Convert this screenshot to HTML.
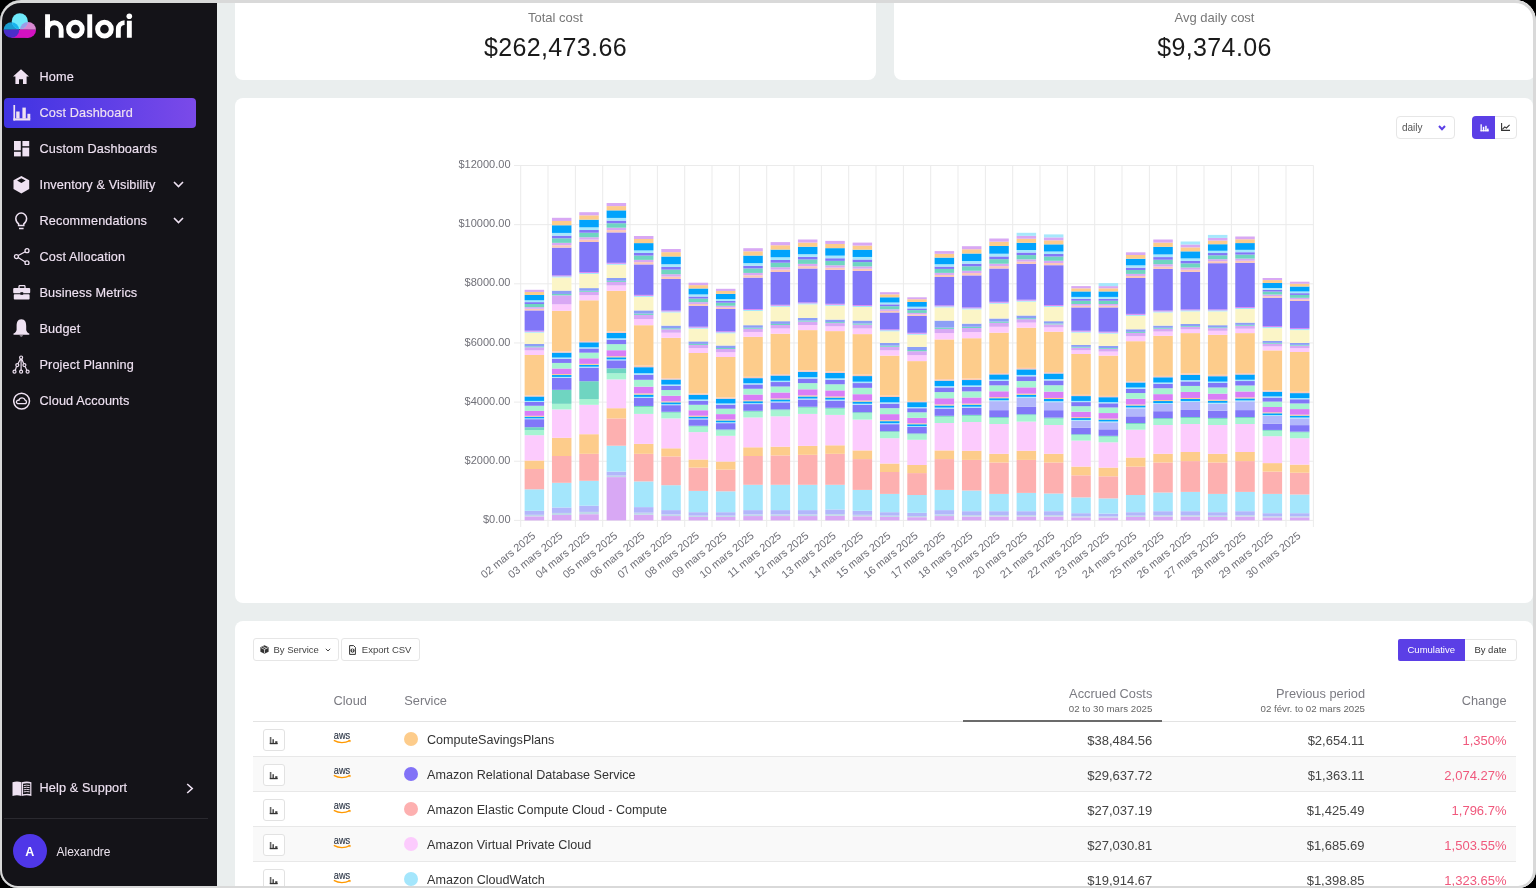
<!DOCTYPE html>
<html><head><meta charset="utf-8">
<style>
*{box-sizing:border-box;margin:0;padding:0}
html,body{width:1536px;height:888px;overflow:hidden;background:#000;font-family:"Liberation Sans",sans-serif}
.frame{position:absolute;left:0;top:0;width:1536px;height:888px;border-radius:21px 21px 18px 18px;overflow:hidden;background:#eaeeee;will-change:transform}
.ring{position:absolute;left:0;top:0;width:1536px;height:888px;border-radius:21px 21px 18px 18px;border:3px solid #d9d9d9;border-left-width:2.5px;border-bottom-width:2px;pointer-events:none;z-index:50}
.abs{position:absolute}
.side{position:absolute;left:0;top:0;width:217px;height:888px;background:#141318}
.nav{position:absolute;left:0;width:217px;height:30px;color:#efe2f2;font-size:12.7px;-webkit-text-stroke:0.15px #efe2f2;letter-spacing:0.12px;line-height:30px}
.nav .tx{position:absolute;left:39.5px;top:0;white-space:nowrap}
.nav svg{position:absolute}
.active{position:absolute;left:4px;top:98px;width:192px;height:29.5px;border-radius:4px;background:linear-gradient(90deg,#3f33e2 0%,#5c3ee6 50%,#7b4ae9 100%)}
.card{position:absolute;background:#fff;border-radius:8px}
.lbl{position:absolute;font-size:13px;color:#777;white-space:nowrap;text-align:center}
.big{position:absolute;font-size:25px;color:#1a1a1a;white-space:nowrap;text-align:center;letter-spacing:0.35px}
.chart{position:absolute;left:0;top:0;z-index:5}
.yl{font-size:11px;fill:#707078;font-family:"Liberation Sans",sans-serif}
.xl{font-size:10.85px;fill:#707078;font-family:"Liberation Sans",sans-serif}
.btn{position:absolute;border:1px solid #e6e6e6;border-radius:3px;background:#fff;font-size:9.5px;color:#444;white-space:nowrap}
.th{position:absolute;font-size:12.8px;color:#7b7b82;white-space:nowrap}
.ths{position:absolute;font-size:9.7px;color:#666;white-space:nowrap}
.row{position:absolute;left:253px;width:1263px;height:35px;border-bottom:1px solid #e8e8e8}
.row.alt{background:#f9f9f9}
.cbtn{position:absolute;left:9.8px;top:7px;width:22px;height:22px;border:1px solid #e2e2e2;border-radius:3px;background:#fff}
.dot{position:absolute;left:151px;width:14px;height:14px;border-radius:50%}
.svc{position:absolute;left:174px;font-size:12.6px;color:#333;white-space:nowrap}
.num{position:absolute;font-size:13px;color:#444;white-space:nowrap;text-align:right}
.chg{position:absolute;font-size:13px;color:#f0587c;white-space:nowrap;text-align:right}
</style></head><body>
<div class="frame">
  <!-- SIDEBAR -->
  <div class="side">
    <!-- logo -->
    <svg class="abs" style="left:0;top:0" width="140" height="45" viewBox="0 0 140 45">
      <defs>
        <clipPath id="up"><rect x="0" y="0" width="40" height="29.8"/></clipPath>
        <clipPath id="dn"><rect x="0" y="29.8" width="40" height="10"/></clipPath>
        <clipPath id="lc"><circle cx="11.4" cy="30" r="7.8"/></clipPath>
        <clipPath id="rc"><circle cx="28" cy="29.9" r="8"/></clipPath>
      </defs>
      <g clip-path="url(#up)">
        <circle cx="11.4" cy="30" r="7.8" fill="#1a9cd0"/>
        <circle cx="28" cy="29.9" r="8" fill="#d98ad2"/>
        <circle cx="19.8" cy="21.2" r="8" fill="#6fe9fa"/>
        <g clip-path="url(#lc)"><circle cx="19.8" cy="21.2" r="8" fill="#18b4ee"/></g>
        <g clip-path="url(#rc)"><circle cx="19.8" cy="21.2" r="8" fill="#9a9fe8"/></g>
      </g>
      <g clip-path="url(#dn)">
        <rect x="11.4" y="22" width="16.6" height="15.9" fill="#d312c1"/>
        <circle cx="28" cy="29.9" r="8" fill="#d312c1"/>
        <circle cx="11.4" cy="30" r="7.8" fill="#4a2ec8"/>
      </g>
      <g fill="none" stroke="#fff" stroke-width="4.9">
        <path d="M47.55 14.3 V37.8"/>
        <path d="M47.55 29.5 A6.8 6.8 0 0 1 61.15 29.5 V37.8"/>
        <circle cx="75.4" cy="29.15" r="6.8" stroke-width="5"/>
        <path d="M89.75 14.3 V37.8"/>
        <circle cx="104.45" cy="29.15" r="6.8" stroke-width="5"/>
        <path d="M118.35 37.8 V28.8 A6.3 6.3 0 0 1 124.6 22.6"/>
        <path d="M129.35 20.8 V37.8"/>
      </g>
      <circle cx="129.3" cy="16.2" r="2.8" fill="#fff"/>
    </svg>
    <div class="active"></div>
    <!-- nav items -->
    <div class="nav" style="top:61.5px">
      <svg style="left:13px;top:7.5px" width="16" height="15" viewBox="0 0 16 15"><path d="M8 0.3 L16 7.6 H13.6 V15 H10 V10.3 H6 V15 H2.4 V7.6 H0 Z" fill="#efe2f2"/></svg>
      <span class="tx">Home</span>
    </div>
    <div class="nav" style="top:97.5px">
      <svg style="left:12.5px;top:7.3px" width="18" height="16" viewBox="0 0 18 16"><rect x="0.4" y="0" width="1.7" height="15.5" fill="#efe2f2"/><rect x="3.2" y="6.5" width="3.4" height="7" fill="#efe2f2"/><rect x="9.4" y="2.6" width="3.4" height="11" fill="#efe2f2"/><rect x="14.4" y="8.8" width="2.9" height="5" fill="#efe2f2"/><rect x="0.4" y="13.3" width="16.9" height="2.2" fill="#efe2f2"/></svg>
      <span class="tx">Cost Dashboard</span>
    </div>
    <div class="nav" style="top:133.5px">
      <svg style="left:13.5px;top:7px" width="16" height="16" viewBox="0 0 16 16"><rect x="0" y="0" width="6.8" height="9.3" fill="#efe2f2"/><rect x="8.4" y="0" width="6.8" height="5.2" fill="#efe2f2"/><rect x="0" y="10.8" width="6.8" height="4.6" fill="#efe2f2"/><rect x="8.4" y="6.6" width="6.8" height="8.8" fill="#efe2f2"/></svg>
      <span class="tx">Custom Dashboards</span>
    </div>
    <div class="nav" style="top:169.5px">
      <svg style="left:13px;top:5.5px" width="17" height="19" viewBox="0 0 17 19"><path d="M8.35 0.9 L16.2 5.3 V14 L8.35 18.4 L0.5 14 V5.3 Z" fill="#efe2f2"/><path d="M8.35 3.2 L12.6 5.6 L8.35 8 L4.1 5.6 Z" fill="#141318"/></svg>
      <span class="tx">Inventory &amp; Visibility</span>
      <svg style="left:173px;top:11.5px" width="11" height="7" viewBox="0 0 11 7"><path d="M1 1 L5.5 5.6 L10 1" fill="none" stroke="#efe2f2" stroke-width="1.6"/></svg>
    </div>
    <div class="nav" style="top:205.5px">
      <svg style="left:14px;top:5px" width="15" height="20" viewBox="0 0 15 20"><path d="M4.6 14.4 V12.9 C3 11.7 1.8 10 1.8 7.5 A5.4 5.4 0 0 1 12.6 7.5 C12.6 10 11.4 11.7 9.8 12.9 V14.4 Z" fill="none" stroke="#efe2f2" stroke-width="1.5"/><path d="M5 17.6 H9.6" stroke="#efe2f2" stroke-width="1.5"/></svg>
      <span class="tx">Recommendations</span>
      <svg style="left:173px;top:11.5px" width="11" height="7" viewBox="0 0 11 7"><path d="M1 1 L5.5 5.6 L10 1" fill="none" stroke="#efe2f2" stroke-width="1.6"/></svg>
    </div>
    <div class="nav" style="top:241.5px">
      <svg style="left:12.5px;top:6px" width="18" height="17" viewBox="0 0 18 17"><circle cx="3.4" cy="8.6" r="2" fill="none" stroke="#efe2f2" stroke-width="1.3"/><circle cx="14" cy="2.7" r="2" fill="none" stroke="#efe2f2" stroke-width="1.3"/><circle cx="14" cy="14.9" r="2" fill="none" stroke="#efe2f2" stroke-width="1.3"/><path d="M5.2 7.6 L12.2 3.7 M5.2 9.6 L12.2 13.9" stroke="#efe2f2" stroke-width="1.2"/></svg>
      <span class="tx">Cost Allocation</span>
    </div>
    <div class="nav" style="top:277.5px">
      <svg style="left:12.5px;top:7.5px" width="18" height="15" viewBox="0 0 18 15"><path d="M6 3 V1.5 Q6 0.6 7 0.6 H11 Q12 0.6 12 1.5 V3" fill="none" stroke="#efe2f2" stroke-width="1.3"/><rect x="0.2" y="3" width="17" height="5.2" rx="1" fill="#efe2f2"/><rect x="0.8" y="9.2" width="15.8" height="5.4" rx="0.8" fill="#efe2f2"/><rect x="7.4" y="7.2" width="2.8" height="2.6" fill="#141318"/></svg>
      <span class="tx">Business Metrics</span>
    </div>
    <div class="nav" style="top:313.5px">
      <svg style="left:13px;top:5.5px" width="17" height="19" viewBox="0 0 17 19"><path d="M8.3 0.3 C4.6 0.3 3.6 3.5 3.6 7 V10.8 C3.6 12.2 2.2 14 0.5 14.6 V15.8 H16.3 V14.6 C14.6 14 13.2 12.2 13.2 10.8 V7 C13.2 3.5 12.2 0.3 8.3 0.3 Z" fill="#efe2f2"/><path d="M6.4 16.4 Q8.3 18.6 10.2 16.4 Z" fill="#efe2f2"/></svg>
      <span class="tx">Budget</span>
    </div>
    <div class="nav" style="top:349.5px">
      <svg style="left:12px;top:5px" width="18" height="19" viewBox="0 0 18 19"><g fill="none" stroke="#efe2f2" stroke-width="1.2"><circle cx="9.1" cy="2.5" r="1.5"/><circle cx="5.3" cy="10.1" r="1.5"/><circle cx="12.4" cy="10.1" r="1.5"/><circle cx="2.5" cy="16.7" r="1.5"/><circle cx="9.1" cy="16.7" r="1.5"/><circle cx="15.6" cy="16.7" r="1.5"/><path d="M8.4 3.9 L6 8.7 M9.8 3.9 L11.7 8.7 M9.1 4 V15.2 M4.5 11.4 L3.3 15.4 M13.2 11.4 L14.8 15.4"/></g></svg>
      <span class="tx">Project Planning</span>
    </div>
    <div class="nav" style="top:385.5px">
      <svg style="left:12.5px;top:6px" width="18" height="18" viewBox="0 0 18 18"><circle cx="8.6" cy="9.1" r="7.9" fill="none" stroke="#efe2f2" stroke-width="1.5"/><path d="M4.6 11.6 H12.6 A1.9 1.9 0 0 0 12.2 8.2 A3.3 3.3 0 0 0 5.9 8.3 A1.7 1.7 0 0 0 4.6 11.6 Z" fill="none" stroke="#efe2f2" stroke-width="1.3"/></svg>
      <span class="tx">Cloud Accounts</span>
    </div>

    <div class="nav" style="top:773px">
      <svg style="left:11.5px;top:7.5px" width="20" height="16" viewBox="0 0 20 16"><path d="M0.5 1.3 Q5 -0.2 9.4 1.3 V15 Q5 13.6 0.5 15 Z" fill="#efe2f2"/><path d="M9.8 1.3 Q14.6 -0.2 19.4 1.3 V15 Q14.6 13.6 9.8 15 Z" fill="#efe2f2"/><path d="M11 2.8 Q14.5 1.6 18.2 2.6 V12.9 Q14.5 12.2 11 13.3 Z" fill="#141318"/><path d="M11.6 4.6 Q14.5 3.8 17.6 4.5 M11.6 6.7 Q14.5 6 17.6 6.6 M11.6 8.8 Q14.5 8.1 17.6 8.7 M11.6 10.9 Q14.5 10.2 17.6 10.8" fill="none" stroke="#efe2f2" stroke-width="0.9"/></svg>
      <span class="tx">Help &amp; Support</span>
      <svg style="left:186px;top:9.5px" width="8" height="11" viewBox="0 0 8 11"><path d="M1.2 1 L6.2 5.5 L1.2 10" fill="none" stroke="#efe2f2" stroke-width="1.6"/></svg>
    </div>
    <div class="abs" style="left:4px;top:818px;width:204px;height:1px;background:#2a292f"></div>
    <div class="abs" style="left:12.7px;top:833.5px;width:34.3px;height:34.3px;border-radius:50%;background:#4f37e8;color:#fff;font-size:12.5px;font-weight:bold;text-align:center;line-height:37px">A</div>
    <div class="abs" style="left:56.5px;top:843.5px;font-size:12px;color:#ece4ee;line-height:16px">Alexandre</div>
  </div>

  <!-- TOP CARDS -->
  <div class="card" style="left:235px;top:-20px;width:641px;height:100px"></div>
  <div class="card" style="left:894px;top:-20px;width:641px;height:100px"></div>
  <div class="lbl" style="left:235px;width:641px;top:10.5px;line-height:14px">Total cost</div>
  <div class="big" style="left:235px;width:641px;top:32.3px;line-height:30px">$262,473.66</div>
  <div class="lbl" style="left:894px;width:641px;top:10.5px;line-height:14px">Avg daily cost</div>
  <div class="big" style="left:894px;width:641px;top:32.3px;line-height:30px">$9,374.06</div>

  <!-- CHART CARD -->
  <div class="card" style="left:235px;top:98px;width:1298px;height:505px"></div>
  <div class="btn" style="left:1396px;top:116px;width:59px;height:22.5px;border-radius:4px;font-size:10px;color:#555;line-height:21px;padding-left:5px">daily
    <svg class="abs" style="left:41px;top:8px" width="8" height="6" viewBox="0 0 8 6"><path d="M1 1 L4 4.2 L7 1" fill="none" stroke="#5b3fe6" stroke-width="2"/></svg>
  </div>
  <div class="abs" style="left:1472px;top:116px;width:44.5px;height:22.5px;border:1px solid #e6e6e6;border-radius:4px;background:#fff"></div>
  <div class="abs" style="left:1472px;top:116px;width:22.5px;height:22.5px;border-radius:4px 0 0 4px;background:#5b3fe6">
    <svg class="abs" style="left:7.5px;top:7.5px" width="9" height="8" viewBox="0 0 9 8"><rect x="0.5" y="0.3" width="1.3" height="7" fill="#fff"/><rect x="2.8" y="2.8" width="1.5" height="4.5" fill="#fff"/><rect x="5.2" y="1.8" width="1.5" height="5.5" fill="#fff"/><rect x="7" y="4.6" width="1.6" height="2.7" fill="#fff"/><rect x="0.5" y="6.2" width="8.1" height="1.1" fill="#fff"/></svg>
  </div>
  <svg class="abs" style="left:1501px;top:123px" width="9" height="8" viewBox="0 0 9 8"><path d="M0.6 0 V7.4 H9" fill="none" stroke="#333" stroke-width="1.1"/><path d="M1.3 6.4 L3.8 3.9 L5.4 5 L8.6 1.9" fill="none" stroke="#333" stroke-width="1.1"/></svg>

  <svg class="chart" width="1536" height="888" viewBox="0 0 1536 888"><line x1="514" y1="520.40" x2="1313.4" y2="520.40" stroke="#ebebeb" stroke-width="1"/><text x="510.5" y="523.00" text-anchor="end" class="yl">$0.00</text><line x1="514" y1="461.25" x2="1313.4" y2="461.25" stroke="#ebebeb" stroke-width="1"/><text x="510.5" y="463.85" text-anchor="end" class="yl">$2000.00</text><line x1="514" y1="402.10" x2="1313.4" y2="402.10" stroke="#ebebeb" stroke-width="1"/><text x="510.5" y="404.70" text-anchor="end" class="yl">$4000.00</text><line x1="514" y1="342.95" x2="1313.4" y2="342.95" stroke="#ebebeb" stroke-width="1"/><text x="510.5" y="345.55" text-anchor="end" class="yl">$6000.00</text><line x1="514" y1="283.80" x2="1313.4" y2="283.80" stroke="#ebebeb" stroke-width="1"/><text x="510.5" y="286.40" text-anchor="end" class="yl">$8000.00</text><line x1="514" y1="224.65" x2="1313.4" y2="224.65" stroke="#ebebeb" stroke-width="1"/><text x="510.5" y="227.25" text-anchor="end" class="yl">$10000.00</text><line x1="514" y1="165.50" x2="1313.4" y2="165.50" stroke="#ebebeb" stroke-width="1"/><text x="510.5" y="168.10" text-anchor="end" class="yl">$12000.00</text><line x1="520.70" y1="165.5" x2="520.70" y2="527" stroke="#ebebeb" stroke-width="1"/><line x1="548.03" y1="165.5" x2="548.03" y2="527" stroke="#ebebeb" stroke-width="1"/><line x1="575.37" y1="165.5" x2="575.37" y2="527" stroke="#ebebeb" stroke-width="1"/><line x1="602.70" y1="165.5" x2="602.70" y2="527" stroke="#ebebeb" stroke-width="1"/><line x1="630.03" y1="165.5" x2="630.03" y2="527" stroke="#ebebeb" stroke-width="1"/><line x1="657.37" y1="165.5" x2="657.37" y2="527" stroke="#ebebeb" stroke-width="1"/><line x1="684.70" y1="165.5" x2="684.70" y2="527" stroke="#ebebeb" stroke-width="1"/><line x1="712.03" y1="165.5" x2="712.03" y2="527" stroke="#ebebeb" stroke-width="1"/><line x1="739.36" y1="165.5" x2="739.36" y2="527" stroke="#ebebeb" stroke-width="1"/><line x1="766.70" y1="165.5" x2="766.70" y2="527" stroke="#ebebeb" stroke-width="1"/><line x1="794.03" y1="165.5" x2="794.03" y2="527" stroke="#ebebeb" stroke-width="1"/><line x1="821.36" y1="165.5" x2="821.36" y2="527" stroke="#ebebeb" stroke-width="1"/><line x1="848.70" y1="165.5" x2="848.70" y2="527" stroke="#ebebeb" stroke-width="1"/><line x1="876.03" y1="165.5" x2="876.03" y2="527" stroke="#ebebeb" stroke-width="1"/><line x1="903.36" y1="165.5" x2="903.36" y2="527" stroke="#ebebeb" stroke-width="1"/><line x1="930.70" y1="165.5" x2="930.70" y2="527" stroke="#ebebeb" stroke-width="1"/><line x1="958.03" y1="165.5" x2="958.03" y2="527" stroke="#ebebeb" stroke-width="1"/><line x1="985.36" y1="165.5" x2="985.36" y2="527" stroke="#ebebeb" stroke-width="1"/><line x1="1012.69" y1="165.5" x2="1012.69" y2="527" stroke="#ebebeb" stroke-width="1"/><line x1="1040.03" y1="165.5" x2="1040.03" y2="527" stroke="#ebebeb" stroke-width="1"/><line x1="1067.36" y1="165.5" x2="1067.36" y2="527" stroke="#ebebeb" stroke-width="1"/><line x1="1094.69" y1="165.5" x2="1094.69" y2="527" stroke="#ebebeb" stroke-width="1"/><line x1="1122.03" y1="165.5" x2="1122.03" y2="527" stroke="#ebebeb" stroke-width="1"/><line x1="1149.36" y1="165.5" x2="1149.36" y2="527" stroke="#ebebeb" stroke-width="1"/><line x1="1176.69" y1="165.5" x2="1176.69" y2="527" stroke="#ebebeb" stroke-width="1"/><line x1="1204.03" y1="165.5" x2="1204.03" y2="527" stroke="#ebebeb" stroke-width="1"/><line x1="1231.36" y1="165.5" x2="1231.36" y2="527" stroke="#ebebeb" stroke-width="1"/><line x1="1258.69" y1="165.5" x2="1258.69" y2="527" stroke="#ebebeb" stroke-width="1"/><line x1="1286.02" y1="165.5" x2="1286.02" y2="527" stroke="#ebebeb" stroke-width="1"/><line x1="1313.36" y1="165.5" x2="1313.36" y2="527" stroke="#ebebeb" stroke-width="1"/><rect x="524.62" y="516.36" width="19.5" height="4.04" fill="#d8a8f4"/><rect x="524.62" y="514.84" width="19.5" height="1.52" fill="#bfd8ea"/><rect x="524.62" y="510.80" width="19.5" height="4.04" fill="#b2b7fb"/><rect x="524.62" y="489.30" width="19.5" height="21.50" fill="#a4e6fc"/><rect x="524.62" y="469.00" width="19.5" height="20.30" fill="#fdb0b0"/><rect x="524.62" y="460.50" width="19.5" height="8.50" fill="#fdcc8b"/><rect x="524.62" y="435.20" width="19.5" height="25.30" fill="#fccbfd"/><rect x="524.62" y="430.17" width="19.5" height="5.03" fill="#a6f4d2"/><rect x="524.62" y="427.17" width="19.5" height="3.00" fill="#6fd5c1"/><rect x="524.62" y="419.17" width="19.5" height="8.00" fill="#8177f8"/><rect x="524.62" y="418.34" width="19.5" height="0.84" fill="#a6e8fc"/><rect x="524.62" y="416.66" width="19.5" height="1.68" fill="#00a3fc"/><rect x="524.62" y="415.82" width="19.5" height="0.84" fill="#fdcc8b"/><rect x="524.62" y="410.80" width="19.5" height="5.03" fill="#d97ef6"/><rect x="524.62" y="405.77" width="19.5" height="5.03" fill="#a6f4d2"/><rect x="524.62" y="402.00" width="19.5" height="3.77" fill="#8177f8"/><rect x="524.62" y="400.91" width="19.5" height="1.09" fill="#a6e8fc"/><rect x="524.62" y="396.47" width="19.5" height="4.44" fill="#00a3fc"/><rect x="524.62" y="395.30" width="19.5" height="1.17" fill="#fcc8b8"/><rect x="524.62" y="355.00" width="19.5" height="40.30" fill="#fdcc8b"/><rect x="524.62" y="350.37" width="19.5" height="4.63" fill="#fccbfd"/><rect x="524.62" y="347.28" width="19.5" height="3.09" fill="#d8a8f4"/><rect x="524.62" y="346.31" width="19.5" height="0.97" fill="#6fd5c1"/><rect x="524.62" y="343.90" width="19.5" height="2.41" fill="#8c9ff6"/><rect x="524.62" y="332.70" width="19.5" height="11.20" fill="#fbf5c7"/><rect x="524.62" y="331.60" width="19.5" height="1.10" fill="#a6e8fc"/><rect x="524.62" y="330.70" width="19.5" height="0.90" fill="#d97ef6"/><rect x="524.62" y="310.40" width="19.5" height="20.30" fill="#8177f8"/><rect x="524.62" y="308.76" width="19.5" height="1.64" fill="#fcc8b8"/><rect x="524.62" y="307.12" width="19.5" height="1.64" fill="#d8a8f4"/><rect x="524.62" y="303.98" width="19.5" height="3.13" fill="#6fd5c1"/><rect x="524.62" y="302.12" width="19.5" height="1.87" fill="#8177f8"/><rect x="524.62" y="300.25" width="19.5" height="1.87" fill="#a6e8fc"/><rect x="524.62" y="294.95" width="19.5" height="5.30" fill="#00a3fc"/><rect x="524.62" y="291.96" width="19.5" height="2.99" fill="#fdcc8b"/><rect x="524.62" y="289.80" width="19.5" height="2.16" fill="#d8a8f4"/><text transform="translate(536.07,537.0) rotate(-39)" text-anchor="end" class="xl">02 mars 2025</text><rect x="551.95" y="514.97" width="19.5" height="5.43" fill="#d8a8f4"/><rect x="551.95" y="512.93" width="19.5" height="2.04" fill="#bfd8ea"/><rect x="551.95" y="507.50" width="19.5" height="5.43" fill="#b2b7fb"/><rect x="551.95" y="482.80" width="19.5" height="24.70" fill="#a4e6fc"/><rect x="551.95" y="456.00" width="19.5" height="26.80" fill="#fdb0b0"/><rect x="551.95" y="437.80" width="19.5" height="18.20" fill="#fdcc8b"/><rect x="551.95" y="409.40" width="19.5" height="28.40" fill="#fccbfd"/><rect x="551.95" y="403.82" width="19.5" height="5.58" fill="#a6f4d2"/><rect x="551.95" y="389.82" width="19.5" height="14.00" fill="#6fd5c1"/><rect x="551.95" y="377.82" width="19.5" height="12.00" fill="#8177f8"/><rect x="551.95" y="376.89" width="19.5" height="0.93" fill="#a6e8fc"/><rect x="551.95" y="375.03" width="19.5" height="1.86" fill="#00a3fc"/><rect x="551.95" y="374.10" width="19.5" height="0.93" fill="#fdcc8b"/><rect x="551.95" y="368.51" width="19.5" height="5.58" fill="#d97ef6"/><rect x="551.95" y="362.93" width="19.5" height="5.58" fill="#a6f4d2"/><rect x="551.95" y="358.74" width="19.5" height="4.19" fill="#8177f8"/><rect x="551.95" y="357.53" width="19.5" height="1.21" fill="#a6e8fc"/><rect x="551.95" y="352.60" width="19.5" height="4.93" fill="#00a3fc"/><rect x="551.95" y="351.30" width="19.5" height="1.30" fill="#fcc8b8"/><rect x="551.95" y="310.80" width="19.5" height="40.50" fill="#fdcc8b"/><rect x="551.95" y="304.32" width="19.5" height="6.48" fill="#fccbfd"/><rect x="551.95" y="295.32" width="19.5" height="9.00" fill="#d8a8f4"/><rect x="551.95" y="293.97" width="19.5" height="1.35" fill="#6fd5c1"/><rect x="551.95" y="290.60" width="19.5" height="3.37" fill="#8c9ff6"/><rect x="551.95" y="277.40" width="19.5" height="13.20" fill="#fbf5c7"/><rect x="551.95" y="276.30" width="19.5" height="1.10" fill="#a6e8fc"/><rect x="551.95" y="275.40" width="19.5" height="0.90" fill="#d97ef6"/><rect x="551.95" y="247.60" width="19.5" height="27.80" fill="#8177f8"/><rect x="551.95" y="245.22" width="19.5" height="2.38" fill="#fcc8b8"/><rect x="551.95" y="242.85" width="19.5" height="2.38" fill="#d8a8f4"/><rect x="551.95" y="238.31" width="19.5" height="4.53" fill="#6fd5c1"/><rect x="551.95" y="235.62" width="19.5" height="2.70" fill="#8177f8"/><rect x="551.95" y="232.92" width="19.5" height="2.70" fill="#a6e8fc"/><rect x="551.95" y="225.25" width="19.5" height="7.67" fill="#00a3fc"/><rect x="551.95" y="220.93" width="19.5" height="4.32" fill="#fdcc8b"/><rect x="551.95" y="217.80" width="19.5" height="3.13" fill="#d8a8f4"/><text transform="translate(563.40,537.0) rotate(-39)" text-anchor="end" class="xl">03 mars 2025</text><rect x="579.28" y="514.21" width="19.5" height="6.19" fill="#d8a8f4"/><rect x="579.28" y="511.89" width="19.5" height="2.32" fill="#bfd8ea"/><rect x="579.28" y="505.70" width="19.5" height="6.19" fill="#b2b7fb"/><rect x="579.28" y="480.80" width="19.5" height="24.90" fill="#a4e6fc"/><rect x="579.28" y="453.80" width="19.5" height="27.00" fill="#fdb0b0"/><rect x="579.28" y="434.20" width="19.5" height="19.60" fill="#fdcc8b"/><rect x="579.28" y="404.80" width="19.5" height="29.40" fill="#fccbfd"/><rect x="579.28" y="399.20" width="19.5" height="5.60" fill="#a6f4d2"/><rect x="579.28" y="381.20" width="19.5" height="18.00" fill="#6fd5c1"/><rect x="579.28" y="367.60" width="19.5" height="13.60" fill="#8177f8"/><rect x="579.28" y="366.67" width="19.5" height="0.93" fill="#a6e8fc"/><rect x="579.28" y="364.80" width="19.5" height="1.87" fill="#00a3fc"/><rect x="579.28" y="363.87" width="19.5" height="0.93" fill="#fdcc8b"/><rect x="579.28" y="358.27" width="19.5" height="5.60" fill="#d97ef6"/><rect x="579.28" y="352.67" width="19.5" height="5.60" fill="#a6f4d2"/><rect x="579.28" y="348.47" width="19.5" height="4.20" fill="#8177f8"/><rect x="579.28" y="347.25" width="19.5" height="1.21" fill="#a6e8fc"/><rect x="579.28" y="342.31" width="19.5" height="4.95" fill="#00a3fc"/><rect x="579.28" y="341.00" width="19.5" height="1.31" fill="#fcc8b8"/><rect x="579.28" y="300.30" width="19.5" height="40.70" fill="#fdcc8b"/><rect x="579.28" y="295.21" width="19.5" height="5.09" fill="#fccbfd"/><rect x="579.28" y="291.81" width="19.5" height="3.39" fill="#d8a8f4"/><rect x="579.28" y="290.75" width="19.5" height="1.06" fill="#6fd5c1"/><rect x="579.28" y="288.10" width="19.5" height="2.65" fill="#8c9ff6"/><rect x="579.28" y="274.00" width="19.5" height="14.10" fill="#fbf5c7"/><rect x="579.28" y="272.90" width="19.5" height="1.10" fill="#a6e8fc"/><rect x="579.28" y="272.00" width="19.5" height="0.90" fill="#d97ef6"/><rect x="579.28" y="242.00" width="19.5" height="30.00" fill="#8177f8"/><rect x="579.28" y="239.62" width="19.5" height="2.38" fill="#fcc8b8"/><rect x="579.28" y="237.25" width="19.5" height="2.38" fill="#d8a8f4"/><rect x="579.28" y="232.71" width="19.5" height="4.53" fill="#6fd5c1"/><rect x="579.28" y="230.02" width="19.5" height="2.70" fill="#8177f8"/><rect x="579.28" y="227.32" width="19.5" height="2.70" fill="#a6e8fc"/><rect x="579.28" y="219.65" width="19.5" height="7.67" fill="#00a3fc"/><rect x="579.28" y="215.33" width="19.5" height="4.32" fill="#fdcc8b"/><rect x="579.28" y="212.20" width="19.5" height="3.13" fill="#d8a8f4"/><text transform="translate(590.73,537.0) rotate(-39)" text-anchor="end" class="xl">04 mars 2025</text><rect x="606.62" y="477.10" width="19.5" height="43.30" fill="#d8a8f4"/><rect x="606.62" y="475.60" width="19.5" height="1.50" fill="#bfd8ea"/><rect x="606.62" y="471.60" width="19.5" height="4.00" fill="#b2b7fb"/><rect x="606.62" y="445.70" width="19.5" height="25.90" fill="#a4e6fc"/><rect x="606.62" y="418.40" width="19.5" height="27.30" fill="#fdb0b0"/><rect x="606.62" y="408.20" width="19.5" height="10.20" fill="#fdcc8b"/><rect x="606.62" y="379.40" width="19.5" height="28.80" fill="#fccbfd"/><rect x="606.62" y="373.33" width="19.5" height="6.07" fill="#a6f4d2"/><rect x="606.62" y="368.33" width="19.5" height="5.00" fill="#6fd5c1"/><rect x="606.62" y="360.33" width="19.5" height="8.00" fill="#8177f8"/><rect x="606.62" y="359.32" width="19.5" height="1.01" fill="#a6e8fc"/><rect x="606.62" y="357.30" width="19.5" height="2.02" fill="#00a3fc"/><rect x="606.62" y="356.28" width="19.5" height="1.01" fill="#fdcc8b"/><rect x="606.62" y="350.21" width="19.5" height="6.07" fill="#d97ef6"/><rect x="606.62" y="344.14" width="19.5" height="6.07" fill="#a6f4d2"/><rect x="606.62" y="339.59" width="19.5" height="4.55" fill="#8177f8"/><rect x="606.62" y="338.28" width="19.5" height="1.32" fill="#a6e8fc"/><rect x="606.62" y="332.92" width="19.5" height="5.36" fill="#00a3fc"/><rect x="606.62" y="331.50" width="19.5" height="1.42" fill="#fcc8b8"/><rect x="606.62" y="290.80" width="19.5" height="40.70" fill="#fdcc8b"/><rect x="606.62" y="285.46" width="19.5" height="5.34" fill="#fccbfd"/><rect x="606.62" y="281.90" width="19.5" height="3.56" fill="#d8a8f4"/><rect x="606.62" y="280.78" width="19.5" height="1.11" fill="#6fd5c1"/><rect x="606.62" y="278.00" width="19.5" height="2.78" fill="#8c9ff6"/><rect x="606.62" y="264.80" width="19.5" height="13.20" fill="#fbf5c7"/><rect x="606.62" y="263.70" width="19.5" height="1.10" fill="#a6e8fc"/><rect x="606.62" y="262.80" width="19.5" height="0.90" fill="#d97ef6"/><rect x="606.62" y="232.40" width="19.5" height="30.40" fill="#8177f8"/><rect x="606.62" y="230.06" width="19.5" height="2.34" fill="#fcc8b8"/><rect x="606.62" y="227.71" width="19.5" height="2.34" fill="#d8a8f4"/><rect x="606.62" y="223.24" width="19.5" height="4.47" fill="#6fd5c1"/><rect x="606.62" y="220.58" width="19.5" height="2.66" fill="#8177f8"/><rect x="606.62" y="217.91" width="19.5" height="2.66" fill="#a6e8fc"/><rect x="606.62" y="210.35" width="19.5" height="7.56" fill="#00a3fc"/><rect x="606.62" y="206.09" width="19.5" height="4.26" fill="#fdcc8b"/><rect x="606.62" y="203.00" width="19.5" height="3.09" fill="#d8a8f4"/><text transform="translate(618.07,537.0) rotate(-39)" text-anchor="end" class="xl">05 mars 2025</text><rect x="633.95" y="514.80" width="19.5" height="5.60" fill="#d8a8f4"/><rect x="633.95" y="512.70" width="19.5" height="2.10" fill="#bfd8ea"/><rect x="633.95" y="507.10" width="19.5" height="5.60" fill="#b2b7fb"/><rect x="633.95" y="481.40" width="19.5" height="25.70" fill="#a4e6fc"/><rect x="633.95" y="453.80" width="19.5" height="27.60" fill="#fdb0b0"/><rect x="633.95" y="443.90" width="19.5" height="9.90" fill="#fdcc8b"/><rect x="633.95" y="413.90" width="19.5" height="30.00" fill="#fccbfd"/><rect x="633.95" y="407.08" width="19.5" height="6.82" fill="#a6f4d2"/><rect x="633.95" y="405.94" width="19.5" height="1.14" fill="#6fd5c1"/><rect x="633.95" y="397.99" width="19.5" height="7.96" fill="#8177f8"/><rect x="633.95" y="396.85" width="19.5" height="1.14" fill="#a6e8fc"/><rect x="633.95" y="394.58" width="19.5" height="2.27" fill="#00a3fc"/><rect x="633.95" y="393.44" width="19.5" height="1.14" fill="#fdcc8b"/><rect x="633.95" y="386.62" width="19.5" height="6.82" fill="#d97ef6"/><rect x="633.95" y="379.81" width="19.5" height="6.82" fill="#a6f4d2"/><rect x="633.95" y="374.69" width="19.5" height="5.11" fill="#8177f8"/><rect x="633.95" y="373.21" width="19.5" height="1.48" fill="#a6e8fc"/><rect x="633.95" y="367.19" width="19.5" height="6.02" fill="#00a3fc"/><rect x="633.95" y="365.60" width="19.5" height="1.59" fill="#fcc8b8"/><rect x="633.95" y="325.20" width="19.5" height="40.40" fill="#fdcc8b"/><rect x="633.95" y="319.02" width="19.5" height="6.18" fill="#fccbfd"/><rect x="633.95" y="314.90" width="19.5" height="4.12" fill="#d8a8f4"/><rect x="633.95" y="313.62" width="19.5" height="1.29" fill="#6fd5c1"/><rect x="633.95" y="310.40" width="19.5" height="3.22" fill="#8c9ff6"/><rect x="633.95" y="296.90" width="19.5" height="13.50" fill="#fbf5c7"/><rect x="633.95" y="295.80" width="19.5" height="1.10" fill="#a6e8fc"/><rect x="633.95" y="294.90" width="19.5" height="0.90" fill="#d97ef6"/><rect x="633.95" y="264.40" width="19.5" height="30.50" fill="#8177f8"/><rect x="633.95" y="262.14" width="19.5" height="2.26" fill="#fcc8b8"/><rect x="633.95" y="259.87" width="19.5" height="2.26" fill="#d8a8f4"/><rect x="633.95" y="255.55" width="19.5" height="4.32" fill="#6fd5c1"/><rect x="633.95" y="252.98" width="19.5" height="2.57" fill="#8177f8"/><rect x="633.95" y="250.41" width="19.5" height="2.57" fill="#a6e8fc"/><rect x="633.95" y="243.10" width="19.5" height="7.31" fill="#00a3fc"/><rect x="633.95" y="238.98" width="19.5" height="4.12" fill="#fdcc8b"/><rect x="633.95" y="236.00" width="19.5" height="2.98" fill="#d8a8f4"/><text transform="translate(645.40,537.0) rotate(-39)" text-anchor="end" class="xl">06 mars 2025</text><rect x="661.28" y="516.06" width="19.5" height="4.34" fill="#d8a8f4"/><rect x="661.28" y="514.44" width="19.5" height="1.63" fill="#bfd8ea"/><rect x="661.28" y="510.10" width="19.5" height="4.34" fill="#b2b7fb"/><rect x="661.28" y="485.20" width="19.5" height="24.90" fill="#a4e6fc"/><rect x="661.28" y="456.40" width="19.5" height="28.80" fill="#fdb0b0"/><rect x="661.28" y="448.30" width="19.5" height="8.10" fill="#fdcc8b"/><rect x="661.28" y="418.40" width="19.5" height="29.90" fill="#fccbfd"/><rect x="661.28" y="412.72" width="19.5" height="5.68" fill="#a6f4d2"/><rect x="661.28" y="411.78" width="19.5" height="0.95" fill="#6fd5c1"/><rect x="661.28" y="405.16" width="19.5" height="6.62" fill="#8177f8"/><rect x="661.28" y="404.21" width="19.5" height="0.95" fill="#a6e8fc"/><rect x="661.28" y="402.32" width="19.5" height="1.89" fill="#00a3fc"/><rect x="661.28" y="401.37" width="19.5" height="0.95" fill="#fdcc8b"/><rect x="661.28" y="395.70" width="19.5" height="5.68" fill="#d97ef6"/><rect x="661.28" y="390.02" width="19.5" height="5.68" fill="#a6f4d2"/><rect x="661.28" y="385.77" width="19.5" height="4.26" fill="#8177f8"/><rect x="661.28" y="384.54" width="19.5" height="1.23" fill="#a6e8fc"/><rect x="661.28" y="379.52" width="19.5" height="5.01" fill="#00a3fc"/><rect x="661.28" y="378.20" width="19.5" height="1.32" fill="#fcc8b8"/><rect x="661.28" y="337.80" width="19.5" height="40.40" fill="#fdcc8b"/><rect x="661.28" y="332.71" width="19.5" height="5.09" fill="#fccbfd"/><rect x="661.28" y="329.31" width="19.5" height="3.39" fill="#d8a8f4"/><rect x="661.28" y="328.25" width="19.5" height="1.06" fill="#6fd5c1"/><rect x="661.28" y="325.60" width="19.5" height="2.65" fill="#8c9ff6"/><rect x="661.28" y="312.50" width="19.5" height="13.10" fill="#fbf5c7"/><rect x="661.28" y="311.40" width="19.5" height="1.10" fill="#a6e8fc"/><rect x="661.28" y="310.50" width="19.5" height="0.90" fill="#d97ef6"/><rect x="661.28" y="279.00" width="19.5" height="31.50" fill="#8177f8"/><rect x="661.28" y="276.61" width="19.5" height="2.39" fill="#fcc8b8"/><rect x="661.28" y="274.22" width="19.5" height="2.39" fill="#d8a8f4"/><rect x="661.28" y="269.65" width="19.5" height="4.57" fill="#6fd5c1"/><rect x="661.28" y="266.93" width="19.5" height="2.72" fill="#8177f8"/><rect x="661.28" y="264.22" width="19.5" height="2.72" fill="#a6e8fc"/><rect x="661.28" y="256.50" width="19.5" height="7.72" fill="#00a3fc"/><rect x="661.28" y="252.15" width="19.5" height="4.35" fill="#fdcc8b"/><rect x="661.28" y="249.00" width="19.5" height="3.15" fill="#d8a8f4"/><text transform="translate(672.73,537.0) rotate(-39)" text-anchor="end" class="xl">07 mars 2025</text><rect x="688.61" y="516.95" width="19.5" height="3.45" fill="#d8a8f4"/><rect x="688.61" y="515.65" width="19.5" height="1.29" fill="#bfd8ea"/><rect x="688.61" y="512.20" width="19.5" height="3.45" fill="#b2b7fb"/><rect x="688.61" y="490.90" width="19.5" height="21.30" fill="#a4e6fc"/><rect x="688.61" y="467.60" width="19.5" height="23.30" fill="#fdb0b0"/><rect x="688.61" y="459.50" width="19.5" height="8.10" fill="#fdcc8b"/><rect x="688.61" y="432.10" width="19.5" height="27.40" fill="#fccbfd"/><rect x="688.61" y="426.64" width="19.5" height="5.46" fill="#a6f4d2"/><rect x="688.61" y="425.73" width="19.5" height="0.91" fill="#6fd5c1"/><rect x="688.61" y="419.35" width="19.5" height="6.37" fill="#8177f8"/><rect x="688.61" y="418.44" width="19.5" height="0.91" fill="#a6e8fc"/><rect x="688.61" y="416.62" width="19.5" height="1.82" fill="#00a3fc"/><rect x="688.61" y="415.71" width="19.5" height="0.91" fill="#fdcc8b"/><rect x="688.61" y="410.25" width="19.5" height="5.46" fill="#d97ef6"/><rect x="688.61" y="404.78" width="19.5" height="5.46" fill="#a6f4d2"/><rect x="688.61" y="400.68" width="19.5" height="4.10" fill="#8177f8"/><rect x="688.61" y="399.50" width="19.5" height="1.18" fill="#a6e8fc"/><rect x="688.61" y="394.67" width="19.5" height="4.83" fill="#00a3fc"/><rect x="688.61" y="393.40" width="19.5" height="1.27" fill="#fcc8b8"/><rect x="688.61" y="353.00" width="19.5" height="40.40" fill="#fdcc8b"/><rect x="688.61" y="348.16" width="19.5" height="4.84" fill="#fccbfd"/><rect x="688.61" y="344.93" width="19.5" height="3.23" fill="#d8a8f4"/><rect x="688.61" y="343.92" width="19.5" height="1.01" fill="#6fd5c1"/><rect x="688.61" y="341.40" width="19.5" height="2.52" fill="#8c9ff6"/><rect x="688.61" y="328.70" width="19.5" height="12.70" fill="#fbf5c7"/><rect x="688.61" y="327.60" width="19.5" height="1.10" fill="#a6e8fc"/><rect x="688.61" y="326.70" width="19.5" height="0.90" fill="#d97ef6"/><rect x="688.61" y="305.80" width="19.5" height="20.90" fill="#8177f8"/><rect x="688.61" y="303.96" width="19.5" height="1.84" fill="#fcc8b8"/><rect x="688.61" y="302.12" width="19.5" height="1.84" fill="#d8a8f4"/><rect x="688.61" y="298.60" width="19.5" height="3.52" fill="#6fd5c1"/><rect x="688.61" y="296.51" width="19.5" height="2.09" fill="#8177f8"/><rect x="688.61" y="294.42" width="19.5" height="2.09" fill="#a6e8fc"/><rect x="688.61" y="288.47" width="19.5" height="5.94" fill="#00a3fc"/><rect x="688.61" y="285.13" width="19.5" height="3.35" fill="#fdcc8b"/><rect x="688.61" y="282.70" width="19.5" height="2.43" fill="#d8a8f4"/><text transform="translate(700.06,537.0) rotate(-39)" text-anchor="end" class="xl">08 mars 2025</text><rect x="715.95" y="516.95" width="19.5" height="3.45" fill="#d8a8f4"/><rect x="715.95" y="515.65" width="19.5" height="1.29" fill="#bfd8ea"/><rect x="715.95" y="512.20" width="19.5" height="3.45" fill="#b2b7fb"/><rect x="715.95" y="491.30" width="19.5" height="20.90" fill="#a4e6fc"/><rect x="715.95" y="469.60" width="19.5" height="21.70" fill="#fdb0b0"/><rect x="715.95" y="461.50" width="19.5" height="8.10" fill="#fdcc8b"/><rect x="715.95" y="435.80" width="19.5" height="25.70" fill="#fccbfd"/><rect x="715.95" y="430.38" width="19.5" height="5.42" fill="#a6f4d2"/><rect x="715.95" y="429.48" width="19.5" height="0.90" fill="#6fd5c1"/><rect x="715.95" y="423.15" width="19.5" height="6.32" fill="#8177f8"/><rect x="715.95" y="422.25" width="19.5" height="0.90" fill="#a6e8fc"/><rect x="715.95" y="420.44" width="19.5" height="1.81" fill="#00a3fc"/><rect x="715.95" y="419.54" width="19.5" height="0.90" fill="#fdcc8b"/><rect x="715.95" y="414.12" width="19.5" height="5.42" fill="#d97ef6"/><rect x="715.95" y="408.69" width="19.5" height="5.42" fill="#a6f4d2"/><rect x="715.95" y="404.63" width="19.5" height="4.07" fill="#8177f8"/><rect x="715.95" y="403.45" width="19.5" height="1.17" fill="#a6e8fc"/><rect x="715.95" y="398.66" width="19.5" height="4.79" fill="#00a3fc"/><rect x="715.95" y="397.40" width="19.5" height="1.26" fill="#fcc8b8"/><rect x="715.95" y="357.00" width="19.5" height="40.40" fill="#fdcc8b"/><rect x="715.95" y="352.20" width="19.5" height="4.80" fill="#fccbfd"/><rect x="715.95" y="349.00" width="19.5" height="3.20" fill="#d8a8f4"/><rect x="715.95" y="348.00" width="19.5" height="1.00" fill="#6fd5c1"/><rect x="715.95" y="345.50" width="19.5" height="2.50" fill="#8c9ff6"/><rect x="715.95" y="333.30" width="19.5" height="12.20" fill="#fbf5c7"/><rect x="715.95" y="332.20" width="19.5" height="1.10" fill="#a6e8fc"/><rect x="715.95" y="331.30" width="19.5" height="0.90" fill="#d97ef6"/><rect x="715.95" y="309.00" width="19.5" height="22.30" fill="#8177f8"/><rect x="715.95" y="307.39" width="19.5" height="1.61" fill="#fcc8b8"/><rect x="715.95" y="305.78" width="19.5" height="1.61" fill="#d8a8f4"/><rect x="715.95" y="302.71" width="19.5" height="3.07" fill="#6fd5c1"/><rect x="715.95" y="300.88" width="19.5" height="1.83" fill="#8177f8"/><rect x="715.95" y="299.05" width="19.5" height="1.83" fill="#a6e8fc"/><rect x="715.95" y="293.85" width="19.5" height="5.20" fill="#00a3fc"/><rect x="715.95" y="290.92" width="19.5" height="2.93" fill="#fdcc8b"/><rect x="715.95" y="288.80" width="19.5" height="2.12" fill="#d8a8f4"/><text transform="translate(727.40,537.0) rotate(-39)" text-anchor="end" class="xl">09 mars 2025</text><rect x="743.28" y="516.06" width="19.5" height="4.34" fill="#d8a8f4"/><rect x="743.28" y="514.44" width="19.5" height="1.63" fill="#bfd8ea"/><rect x="743.28" y="510.10" width="19.5" height="4.34" fill="#b2b7fb"/><rect x="743.28" y="484.80" width="19.5" height="25.30" fill="#a4e6fc"/><rect x="743.28" y="456.00" width="19.5" height="28.80" fill="#fdb0b0"/><rect x="743.28" y="447.30" width="19.5" height="8.70" fill="#fdcc8b"/><rect x="743.28" y="417.50" width="19.5" height="29.80" fill="#fccbfd"/><rect x="743.28" y="411.75" width="19.5" height="5.75" fill="#a6f4d2"/><rect x="743.28" y="410.80" width="19.5" height="0.96" fill="#6fd5c1"/><rect x="743.28" y="404.09" width="19.5" height="6.70" fill="#8177f8"/><rect x="743.28" y="403.14" width="19.5" height="0.96" fill="#a6e8fc"/><rect x="743.28" y="401.22" width="19.5" height="1.92" fill="#00a3fc"/><rect x="743.28" y="400.26" width="19.5" height="0.96" fill="#fdcc8b"/><rect x="743.28" y="394.52" width="19.5" height="5.75" fill="#d97ef6"/><rect x="743.28" y="388.77" width="19.5" height="5.75" fill="#a6f4d2"/><rect x="743.28" y="384.46" width="19.5" height="4.31" fill="#8177f8"/><rect x="743.28" y="383.22" width="19.5" height="1.24" fill="#a6e8fc"/><rect x="743.28" y="378.14" width="19.5" height="5.08" fill="#00a3fc"/><rect x="743.28" y="376.80" width="19.5" height="1.34" fill="#fcc8b8"/><rect x="743.28" y="336.80" width="19.5" height="40.00" fill="#fdcc8b"/><rect x="743.28" y="331.96" width="19.5" height="4.84" fill="#fccbfd"/><rect x="743.28" y="328.73" width="19.5" height="3.23" fill="#d8a8f4"/><rect x="743.28" y="327.72" width="19.5" height="1.01" fill="#6fd5c1"/><rect x="743.28" y="325.20" width="19.5" height="2.52" fill="#8c9ff6"/><rect x="743.28" y="311.00" width="19.5" height="14.20" fill="#fbf5c7"/><rect x="743.28" y="309.90" width="19.5" height="1.10" fill="#a6e8fc"/><rect x="743.28" y="309.00" width="19.5" height="0.90" fill="#d97ef6"/><rect x="743.28" y="277.60" width="19.5" height="31.40" fill="#8177f8"/><rect x="743.28" y="275.26" width="19.5" height="2.34" fill="#fcc8b8"/><rect x="743.28" y="272.91" width="19.5" height="2.34" fill="#d8a8f4"/><rect x="743.28" y="268.44" width="19.5" height="4.47" fill="#6fd5c1"/><rect x="743.28" y="265.78" width="19.5" height="2.66" fill="#8177f8"/><rect x="743.28" y="263.11" width="19.5" height="2.66" fill="#a6e8fc"/><rect x="743.28" y="255.55" width="19.5" height="7.56" fill="#00a3fc"/><rect x="743.28" y="251.29" width="19.5" height="4.26" fill="#fdcc8b"/><rect x="743.28" y="248.20" width="19.5" height="3.09" fill="#d8a8f4"/><text transform="translate(754.73,537.0) rotate(-39)" text-anchor="end" class="xl">10 mars 2025</text><rect x="770.61" y="516.06" width="19.5" height="4.34" fill="#d8a8f4"/><rect x="770.61" y="514.44" width="19.5" height="1.63" fill="#bfd8ea"/><rect x="770.61" y="510.10" width="19.5" height="4.34" fill="#b2b7fb"/><rect x="770.61" y="484.80" width="19.5" height="25.30" fill="#a4e6fc"/><rect x="770.61" y="455.40" width="19.5" height="29.40" fill="#fdb0b0"/><rect x="770.61" y="446.70" width="19.5" height="8.70" fill="#fdcc8b"/><rect x="770.61" y="416.30" width="19.5" height="30.40" fill="#fccbfd"/><rect x="770.61" y="410.34" width="19.5" height="5.96" fill="#a6f4d2"/><rect x="770.61" y="409.35" width="19.5" height="0.99" fill="#6fd5c1"/><rect x="770.61" y="402.40" width="19.5" height="6.95" fill="#8177f8"/><rect x="770.61" y="401.41" width="19.5" height="0.99" fill="#a6e8fc"/><rect x="770.61" y="399.42" width="19.5" height="1.99" fill="#00a3fc"/><rect x="770.61" y="398.43" width="19.5" height="0.99" fill="#fdcc8b"/><rect x="770.61" y="392.47" width="19.5" height="5.96" fill="#d97ef6"/><rect x="770.61" y="386.51" width="19.5" height="5.96" fill="#a6f4d2"/><rect x="770.61" y="382.04" width="19.5" height="4.47" fill="#8177f8"/><rect x="770.61" y="380.75" width="19.5" height="1.29" fill="#a6e8fc"/><rect x="770.61" y="375.49" width="19.5" height="5.26" fill="#00a3fc"/><rect x="770.61" y="374.10" width="19.5" height="1.39" fill="#fcc8b8"/><rect x="770.61" y="333.70" width="19.5" height="40.40" fill="#fdcc8b"/><rect x="770.61" y="328.48" width="19.5" height="5.22" fill="#fccbfd"/><rect x="770.61" y="325.00" width="19.5" height="3.48" fill="#d8a8f4"/><rect x="770.61" y="323.92" width="19.5" height="1.09" fill="#6fd5c1"/><rect x="770.61" y="321.20" width="19.5" height="2.72" fill="#8c9ff6"/><rect x="770.61" y="306.80" width="19.5" height="14.40" fill="#fbf5c7"/><rect x="770.61" y="305.70" width="19.5" height="1.10" fill="#a6e8fc"/><rect x="770.61" y="304.80" width="19.5" height="0.90" fill="#d97ef6"/><rect x="770.61" y="272.00" width="19.5" height="32.80" fill="#8177f8"/><rect x="770.61" y="269.62" width="19.5" height="2.38" fill="#fcc8b8"/><rect x="770.61" y="267.23" width="19.5" height="2.38" fill="#d8a8f4"/><rect x="770.61" y="262.68" width="19.5" height="4.55" fill="#6fd5c1"/><rect x="770.61" y="259.98" width="19.5" height="2.71" fill="#8177f8"/><rect x="770.61" y="257.27" width="19.5" height="2.71" fill="#a6e8fc"/><rect x="770.61" y="249.58" width="19.5" height="7.69" fill="#00a3fc"/><rect x="770.61" y="245.24" width="19.5" height="4.33" fill="#fdcc8b"/><rect x="770.61" y="242.10" width="19.5" height="3.14" fill="#d8a8f4"/><text transform="translate(782.06,537.0) rotate(-39)" text-anchor="end" class="xl">11 mars 2025</text><rect x="797.95" y="516.06" width="19.5" height="4.34" fill="#d8a8f4"/><rect x="797.95" y="514.44" width="19.5" height="1.63" fill="#bfd8ea"/><rect x="797.95" y="510.10" width="19.5" height="4.34" fill="#b2b7fb"/><rect x="797.95" y="484.80" width="19.5" height="25.30" fill="#a4e6fc"/><rect x="797.95" y="454.80" width="19.5" height="30.00" fill="#fdb0b0"/><rect x="797.95" y="445.90" width="19.5" height="8.90" fill="#fdcc8b"/><rect x="797.95" y="413.90" width="19.5" height="32.00" fill="#fccbfd"/><rect x="797.95" y="407.74" width="19.5" height="6.16" fill="#a6f4d2"/><rect x="797.95" y="406.72" width="19.5" height="1.03" fill="#6fd5c1"/><rect x="797.95" y="399.54" width="19.5" height="7.18" fill="#8177f8"/><rect x="797.95" y="398.51" width="19.5" height="1.03" fill="#a6e8fc"/><rect x="797.95" y="396.46" width="19.5" height="2.05" fill="#00a3fc"/><rect x="797.95" y="395.43" width="19.5" height="1.03" fill="#fdcc8b"/><rect x="797.95" y="389.28" width="19.5" height="6.16" fill="#d97ef6"/><rect x="797.95" y="383.12" width="19.5" height="6.16" fill="#a6f4d2"/><rect x="797.95" y="378.51" width="19.5" height="4.62" fill="#8177f8"/><rect x="797.95" y="377.17" width="19.5" height="1.33" fill="#a6e8fc"/><rect x="797.95" y="371.74" width="19.5" height="5.44" fill="#00a3fc"/><rect x="797.95" y="370.30" width="19.5" height="1.44" fill="#fcc8b8"/><rect x="797.95" y="330.10" width="19.5" height="40.20" fill="#fdcc8b"/><rect x="797.95" y="325.01" width="19.5" height="5.09" fill="#fccbfd"/><rect x="797.95" y="321.61" width="19.5" height="3.39" fill="#d8a8f4"/><rect x="797.95" y="320.55" width="19.5" height="1.06" fill="#6fd5c1"/><rect x="797.95" y="317.90" width="19.5" height="2.65" fill="#8c9ff6"/><rect x="797.95" y="304.40" width="19.5" height="13.50" fill="#fbf5c7"/><rect x="797.95" y="303.30" width="19.5" height="1.10" fill="#a6e8fc"/><rect x="797.95" y="302.40" width="19.5" height="0.90" fill="#d97ef6"/><rect x="797.95" y="268.50" width="19.5" height="33.90" fill="#8177f8"/><rect x="797.95" y="266.19" width="19.5" height="2.31" fill="#fcc8b8"/><rect x="797.95" y="263.88" width="19.5" height="2.31" fill="#d8a8f4"/><rect x="797.95" y="259.46" width="19.5" height="4.41" fill="#6fd5c1"/><rect x="797.95" y="256.84" width="19.5" height="2.63" fill="#8177f8"/><rect x="797.95" y="254.21" width="19.5" height="2.63" fill="#a6e8fc"/><rect x="797.95" y="246.75" width="19.5" height="7.46" fill="#00a3fc"/><rect x="797.95" y="242.55" width="19.5" height="4.20" fill="#fdcc8b"/><rect x="797.95" y="239.50" width="19.5" height="3.05" fill="#d8a8f4"/><text transform="translate(809.40,537.0) rotate(-39)" text-anchor="end" class="xl">12 mars 2025</text><rect x="825.28" y="515.81" width="19.5" height="4.59" fill="#d8a8f4"/><rect x="825.28" y="514.09" width="19.5" height="1.72" fill="#bfd8ea"/><rect x="825.28" y="509.50" width="19.5" height="4.59" fill="#b2b7fb"/><rect x="825.28" y="484.80" width="19.5" height="24.70" fill="#a4e6fc"/><rect x="825.28" y="453.80" width="19.5" height="31.00" fill="#fdb0b0"/><rect x="825.28" y="445.30" width="19.5" height="8.50" fill="#fdcc8b"/><rect x="825.28" y="414.90" width="19.5" height="30.40" fill="#fccbfd"/><rect x="825.28" y="408.77" width="19.5" height="6.13" fill="#a6f4d2"/><rect x="825.28" y="407.75" width="19.5" height="1.02" fill="#6fd5c1"/><rect x="825.28" y="400.60" width="19.5" height="7.15" fill="#8177f8"/><rect x="825.28" y="399.58" width="19.5" height="1.02" fill="#a6e8fc"/><rect x="825.28" y="397.54" width="19.5" height="2.04" fill="#00a3fc"/><rect x="825.28" y="396.52" width="19.5" height="1.02" fill="#fdcc8b"/><rect x="825.28" y="390.39" width="19.5" height="6.13" fill="#d97ef6"/><rect x="825.28" y="384.26" width="19.5" height="6.13" fill="#a6f4d2"/><rect x="825.28" y="379.67" width="19.5" height="4.60" fill="#8177f8"/><rect x="825.28" y="378.34" width="19.5" height="1.33" fill="#a6e8fc"/><rect x="825.28" y="372.93" width="19.5" height="5.41" fill="#00a3fc"/><rect x="825.28" y="371.50" width="19.5" height="1.43" fill="#fcc8b8"/><rect x="825.28" y="331.10" width="19.5" height="40.40" fill="#fdcc8b"/><rect x="825.28" y="326.30" width="19.5" height="4.80" fill="#fccbfd"/><rect x="825.28" y="323.10" width="19.5" height="3.20" fill="#d8a8f4"/><rect x="825.28" y="322.10" width="19.5" height="1.00" fill="#6fd5c1"/><rect x="825.28" y="319.60" width="19.5" height="2.50" fill="#8c9ff6"/><rect x="825.28" y="305.80" width="19.5" height="13.80" fill="#fbf5c7"/><rect x="825.28" y="304.70" width="19.5" height="1.10" fill="#a6e8fc"/><rect x="825.28" y="303.80" width="19.5" height="0.90" fill="#d97ef6"/><rect x="825.28" y="269.90" width="19.5" height="33.90" fill="#8177f8"/><rect x="825.28" y="267.59" width="19.5" height="2.31" fill="#fcc8b8"/><rect x="825.28" y="265.28" width="19.5" height="2.31" fill="#d8a8f4"/><rect x="825.28" y="260.86" width="19.5" height="4.41" fill="#6fd5c1"/><rect x="825.28" y="258.24" width="19.5" height="2.63" fill="#8177f8"/><rect x="825.28" y="255.61" width="19.5" height="2.63" fill="#a6e8fc"/><rect x="825.28" y="248.15" width="19.5" height="7.46" fill="#00a3fc"/><rect x="825.28" y="243.95" width="19.5" height="4.20" fill="#fdcc8b"/><rect x="825.28" y="240.90" width="19.5" height="3.05" fill="#d8a8f4"/><text transform="translate(836.73,537.0) rotate(-39)" text-anchor="end" class="xl">13 mars 2025</text><rect x="852.61" y="516.36" width="19.5" height="4.04" fill="#d8a8f4"/><rect x="852.61" y="514.84" width="19.5" height="1.52" fill="#bfd8ea"/><rect x="852.61" y="510.80" width="19.5" height="4.04" fill="#b2b7fb"/><rect x="852.61" y="489.90" width="19.5" height="20.90" fill="#a4e6fc"/><rect x="852.61" y="459.10" width="19.5" height="30.80" fill="#fdb0b0"/><rect x="852.61" y="450.40" width="19.5" height="8.70" fill="#fdcc8b"/><rect x="852.61" y="419.60" width="19.5" height="30.80" fill="#fccbfd"/><rect x="852.61" y="413.25" width="19.5" height="6.35" fill="#a6f4d2"/><rect x="852.61" y="412.19" width="19.5" height="1.06" fill="#6fd5c1"/><rect x="852.61" y="404.78" width="19.5" height="7.41" fill="#8177f8"/><rect x="852.61" y="403.72" width="19.5" height="1.06" fill="#a6e8fc"/><rect x="852.61" y="401.60" width="19.5" height="2.12" fill="#00a3fc"/><rect x="852.61" y="400.54" width="19.5" height="1.06" fill="#fdcc8b"/><rect x="852.61" y="394.19" width="19.5" height="6.35" fill="#d97ef6"/><rect x="852.61" y="387.84" width="19.5" height="6.35" fill="#a6f4d2"/><rect x="852.61" y="383.07" width="19.5" height="4.76" fill="#8177f8"/><rect x="852.61" y="381.69" width="19.5" height="1.38" fill="#a6e8fc"/><rect x="852.61" y="376.08" width="19.5" height="5.61" fill="#00a3fc"/><rect x="852.61" y="374.60" width="19.5" height="1.48" fill="#fcc8b8"/><rect x="852.61" y="334.10" width="19.5" height="40.50" fill="#fdcc8b"/><rect x="852.61" y="328.47" width="19.5" height="5.63" fill="#fccbfd"/><rect x="852.61" y="324.71" width="19.5" height="3.76" fill="#d8a8f4"/><rect x="852.61" y="323.53" width="19.5" height="1.17" fill="#6fd5c1"/><rect x="852.61" y="320.60" width="19.5" height="2.93" fill="#8c9ff6"/><rect x="852.61" y="307.00" width="19.5" height="13.60" fill="#fbf5c7"/><rect x="852.61" y="305.90" width="19.5" height="1.10" fill="#a6e8fc"/><rect x="852.61" y="305.00" width="19.5" height="0.90" fill="#d97ef6"/><rect x="852.61" y="270.90" width="19.5" height="34.10" fill="#8177f8"/><rect x="852.61" y="268.64" width="19.5" height="2.26" fill="#fcc8b8"/><rect x="852.61" y="266.39" width="19.5" height="2.26" fill="#d8a8f4"/><rect x="852.61" y="262.08" width="19.5" height="4.31" fill="#6fd5c1"/><rect x="852.61" y="259.52" width="19.5" height="2.56" fill="#8177f8"/><rect x="852.61" y="256.96" width="19.5" height="2.56" fill="#a6e8fc"/><rect x="852.61" y="249.68" width="19.5" height="7.28" fill="#00a3fc"/><rect x="852.61" y="245.57" width="19.5" height="4.10" fill="#fdcc8b"/><rect x="852.61" y="242.60" width="19.5" height="2.97" fill="#d8a8f4"/><text transform="translate(864.06,537.0) rotate(-39)" text-anchor="end" class="xl">14 mars 2025</text><rect x="879.95" y="516.95" width="19.5" height="3.45" fill="#d8a8f4"/><rect x="879.95" y="515.65" width="19.5" height="1.29" fill="#bfd8ea"/><rect x="879.95" y="512.20" width="19.5" height="3.45" fill="#b2b7fb"/><rect x="879.95" y="493.90" width="19.5" height="18.30" fill="#a4e6fc"/><rect x="879.95" y="472.00" width="19.5" height="21.90" fill="#fdb0b0"/><rect x="879.95" y="463.50" width="19.5" height="8.50" fill="#fdcc8b"/><rect x="879.95" y="438.20" width="19.5" height="25.30" fill="#fccbfd"/><rect x="879.95" y="432.19" width="19.5" height="6.01" fill="#a6f4d2"/><rect x="879.95" y="431.18" width="19.5" height="1.00" fill="#6fd5c1"/><rect x="879.95" y="424.17" width="19.5" height="7.02" fill="#8177f8"/><rect x="879.95" y="423.16" width="19.5" height="1.00" fill="#a6e8fc"/><rect x="879.95" y="421.16" width="19.5" height="2.00" fill="#00a3fc"/><rect x="879.95" y="420.16" width="19.5" height="1.00" fill="#fdcc8b"/><rect x="879.95" y="414.14" width="19.5" height="6.01" fill="#d97ef6"/><rect x="879.95" y="408.13" width="19.5" height="6.01" fill="#a6f4d2"/><rect x="879.95" y="403.62" width="19.5" height="4.51" fill="#8177f8"/><rect x="879.95" y="402.32" width="19.5" height="1.30" fill="#a6e8fc"/><rect x="879.95" y="397.00" width="19.5" height="5.31" fill="#00a3fc"/><rect x="879.95" y="395.60" width="19.5" height="1.40" fill="#fcc8b8"/><rect x="879.95" y="355.60" width="19.5" height="40.00" fill="#fdcc8b"/><rect x="879.95" y="350.30" width="19.5" height="5.30" fill="#fccbfd"/><rect x="879.95" y="346.77" width="19.5" height="3.53" fill="#d8a8f4"/><rect x="879.95" y="345.66" width="19.5" height="1.10" fill="#6fd5c1"/><rect x="879.95" y="342.90" width="19.5" height="2.76" fill="#8c9ff6"/><rect x="879.95" y="331.30" width="19.5" height="11.60" fill="#fbf5c7"/><rect x="879.95" y="330.20" width="19.5" height="1.10" fill="#a6e8fc"/><rect x="879.95" y="329.30" width="19.5" height="0.90" fill="#d97ef6"/><rect x="879.95" y="312.50" width="19.5" height="16.80" fill="#8177f8"/><rect x="879.95" y="310.88" width="19.5" height="1.62" fill="#fcc8b8"/><rect x="879.95" y="309.26" width="19.5" height="1.62" fill="#d8a8f4"/><rect x="879.95" y="306.17" width="19.5" height="3.09" fill="#6fd5c1"/><rect x="879.95" y="304.34" width="19.5" height="1.84" fill="#8177f8"/><rect x="879.95" y="302.50" width="19.5" height="1.84" fill="#a6e8fc"/><rect x="879.95" y="297.28" width="19.5" height="5.22" fill="#00a3fc"/><rect x="879.95" y="294.33" width="19.5" height="2.94" fill="#fdcc8b"/><rect x="879.95" y="292.20" width="19.5" height="2.13" fill="#d8a8f4"/><text transform="translate(891.40,537.0) rotate(-39)" text-anchor="end" class="xl">15 mars 2025</text><rect x="907.28" y="517.20" width="19.5" height="3.20" fill="#d8a8f4"/><rect x="907.28" y="516.00" width="19.5" height="1.20" fill="#bfd8ea"/><rect x="907.28" y="512.80" width="19.5" height="3.20" fill="#b2b7fb"/><rect x="907.28" y="495.00" width="19.5" height="17.80" fill="#a4e6fc"/><rect x="907.28" y="473.10" width="19.5" height="21.90" fill="#fdb0b0"/><rect x="907.28" y="465.00" width="19.5" height="8.10" fill="#fdcc8b"/><rect x="907.28" y="439.80" width="19.5" height="25.20" fill="#fccbfd"/><rect x="907.28" y="434.31" width="19.5" height="5.49" fill="#a6f4d2"/><rect x="907.28" y="433.39" width="19.5" height="0.92" fill="#6fd5c1"/><rect x="907.28" y="426.99" width="19.5" height="6.41" fill="#8177f8"/><rect x="907.28" y="426.07" width="19.5" height="0.92" fill="#a6e8fc"/><rect x="907.28" y="424.24" width="19.5" height="1.83" fill="#00a3fc"/><rect x="907.28" y="423.32" width="19.5" height="0.92" fill="#fdcc8b"/><rect x="907.28" y="417.83" width="19.5" height="5.49" fill="#d97ef6"/><rect x="907.28" y="412.34" width="19.5" height="5.49" fill="#a6f4d2"/><rect x="907.28" y="408.22" width="19.5" height="4.12" fill="#8177f8"/><rect x="907.28" y="407.03" width="19.5" height="1.19" fill="#a6e8fc"/><rect x="907.28" y="402.18" width="19.5" height="4.85" fill="#00a3fc"/><rect x="907.28" y="400.90" width="19.5" height="1.28" fill="#fcc8b8"/><rect x="907.28" y="361.10" width="19.5" height="39.80" fill="#fdcc8b"/><rect x="907.28" y="355.17" width="19.5" height="5.93" fill="#fccbfd"/><rect x="907.28" y="351.22" width="19.5" height="3.95" fill="#d8a8f4"/><rect x="907.28" y="349.99" width="19.5" height="1.23" fill="#6fd5c1"/><rect x="907.28" y="346.90" width="19.5" height="3.09" fill="#8c9ff6"/><rect x="907.28" y="334.80" width="19.5" height="12.10" fill="#fbf5c7"/><rect x="907.28" y="333.70" width="19.5" height="1.10" fill="#a6e8fc"/><rect x="907.28" y="332.80" width="19.5" height="0.90" fill="#d97ef6"/><rect x="907.28" y="315.90" width="19.5" height="16.90" fill="#8177f8"/><rect x="907.28" y="314.42" width="19.5" height="1.48" fill="#fcc8b8"/><rect x="907.28" y="312.93" width="19.5" height="1.48" fill="#d8a8f4"/><rect x="907.28" y="310.10" width="19.5" height="2.83" fill="#6fd5c1"/><rect x="907.28" y="308.42" width="19.5" height="1.68" fill="#8177f8"/><rect x="907.28" y="306.73" width="19.5" height="1.68" fill="#a6e8fc"/><rect x="907.28" y="301.95" width="19.5" height="4.78" fill="#00a3fc"/><rect x="907.28" y="299.25" width="19.5" height="2.70" fill="#fdcc8b"/><rect x="907.28" y="297.30" width="19.5" height="1.95" fill="#d8a8f4"/><text transform="translate(918.73,537.0) rotate(-39)" text-anchor="end" class="xl">16 mars 2025</text><rect x="934.61" y="516.06" width="19.5" height="4.34" fill="#d8a8f4"/><rect x="934.61" y="514.44" width="19.5" height="1.63" fill="#bfd8ea"/><rect x="934.61" y="510.10" width="19.5" height="4.34" fill="#b2b7fb"/><rect x="934.61" y="489.90" width="19.5" height="20.20" fill="#a4e6fc"/><rect x="934.61" y="459.10" width="19.5" height="30.80" fill="#fdb0b0"/><rect x="934.61" y="450.40" width="19.5" height="8.70" fill="#fdcc8b"/><rect x="934.61" y="423.00" width="19.5" height="27.40" fill="#fccbfd"/><rect x="934.61" y="416.82" width="19.5" height="6.18" fill="#a6f4d2"/><rect x="934.61" y="415.79" width="19.5" height="1.03" fill="#6fd5c1"/><rect x="934.61" y="408.57" width="19.5" height="7.21" fill="#8177f8"/><rect x="934.61" y="407.54" width="19.5" height="1.03" fill="#a6e8fc"/><rect x="934.61" y="405.48" width="19.5" height="2.06" fill="#00a3fc"/><rect x="934.61" y="404.45" width="19.5" height="1.03" fill="#fdcc8b"/><rect x="934.61" y="398.27" width="19.5" height="6.18" fill="#d97ef6"/><rect x="934.61" y="392.08" width="19.5" height="6.18" fill="#a6f4d2"/><rect x="934.61" y="387.44" width="19.5" height="4.64" fill="#8177f8"/><rect x="934.61" y="386.10" width="19.5" height="1.34" fill="#a6e8fc"/><rect x="934.61" y="380.64" width="19.5" height="5.46" fill="#00a3fc"/><rect x="934.61" y="379.20" width="19.5" height="1.44" fill="#fcc8b8"/><rect x="934.61" y="339.40" width="19.5" height="39.80" fill="#fdcc8b"/><rect x="934.61" y="333.11" width="19.5" height="6.29" fill="#fccbfd"/><rect x="934.61" y="328.91" width="19.5" height="4.20" fill="#d8a8f4"/><rect x="934.61" y="327.60" width="19.5" height="1.31" fill="#6fd5c1"/><rect x="934.61" y="320.60" width="19.5" height="7.00" fill="#8c9ff6"/><rect x="934.61" y="307.40" width="19.5" height="13.20" fill="#fbf5c7"/><rect x="934.61" y="306.30" width="19.5" height="1.10" fill="#a6e8fc"/><rect x="934.61" y="305.40" width="19.5" height="0.90" fill="#d97ef6"/><rect x="934.61" y="277.00" width="19.5" height="28.40" fill="#8177f8"/><rect x="934.61" y="274.94" width="19.5" height="2.06" fill="#fcc8b8"/><rect x="934.61" y="272.87" width="19.5" height="2.06" fill="#d8a8f4"/><rect x="934.61" y="268.93" width="19.5" height="3.94" fill="#6fd5c1"/><rect x="934.61" y="266.58" width="19.5" height="2.35" fill="#8177f8"/><rect x="934.61" y="264.24" width="19.5" height="2.35" fill="#a6e8fc"/><rect x="934.61" y="257.57" width="19.5" height="6.66" fill="#00a3fc"/><rect x="934.61" y="253.82" width="19.5" height="3.75" fill="#fdcc8b"/><rect x="934.61" y="251.10" width="19.5" height="2.72" fill="#d8a8f4"/><text transform="translate(946.06,537.0) rotate(-39)" text-anchor="end" class="xl">17 mars 2025</text><rect x="961.94" y="516.53" width="19.5" height="3.87" fill="#d8a8f4"/><rect x="961.94" y="515.07" width="19.5" height="1.45" fill="#bfd8ea"/><rect x="961.94" y="511.20" width="19.5" height="3.87" fill="#b2b7fb"/><rect x="961.94" y="490.50" width="19.5" height="20.70" fill="#a4e6fc"/><rect x="961.94" y="459.90" width="19.5" height="30.60" fill="#fdb0b0"/><rect x="961.94" y="450.80" width="19.5" height="9.10" fill="#fdcc8b"/><rect x="961.94" y="422.00" width="19.5" height="28.80" fill="#fccbfd"/><rect x="961.94" y="415.87" width="19.5" height="6.13" fill="#a6f4d2"/><rect x="961.94" y="414.85" width="19.5" height="1.02" fill="#6fd5c1"/><rect x="961.94" y="407.70" width="19.5" height="7.15" fill="#8177f8"/><rect x="961.94" y="406.68" width="19.5" height="1.02" fill="#a6e8fc"/><rect x="961.94" y="404.64" width="19.5" height="2.04" fill="#00a3fc"/><rect x="961.94" y="403.62" width="19.5" height="1.02" fill="#fdcc8b"/><rect x="961.94" y="397.49" width="19.5" height="6.13" fill="#d97ef6"/><rect x="961.94" y="391.36" width="19.5" height="6.13" fill="#a6f4d2"/><rect x="961.94" y="386.77" width="19.5" height="4.60" fill="#8177f8"/><rect x="961.94" y="385.44" width="19.5" height="1.33" fill="#a6e8fc"/><rect x="961.94" y="380.03" width="19.5" height="5.41" fill="#00a3fc"/><rect x="961.94" y="378.60" width="19.5" height="1.43" fill="#fcc8b8"/><rect x="961.94" y="338.20" width="19.5" height="40.40" fill="#fdcc8b"/><rect x="961.94" y="332.11" width="19.5" height="6.09" fill="#fccbfd"/><rect x="961.94" y="328.04" width="19.5" height="4.06" fill="#d8a8f4"/><rect x="961.94" y="326.77" width="19.5" height="1.27" fill="#6fd5c1"/><rect x="961.94" y="323.60" width="19.5" height="3.17" fill="#8c9ff6"/><rect x="961.94" y="309.40" width="19.5" height="14.20" fill="#fbf5c7"/><rect x="961.94" y="308.30" width="19.5" height="1.10" fill="#a6e8fc"/><rect x="961.94" y="307.40" width="19.5" height="0.90" fill="#d97ef6"/><rect x="961.94" y="275.40" width="19.5" height="32.00" fill="#8177f8"/><rect x="961.94" y="273.07" width="19.5" height="2.33" fill="#fcc8b8"/><rect x="961.94" y="270.74" width="19.5" height="2.33" fill="#d8a8f4"/><rect x="961.94" y="266.30" width="19.5" height="4.44" fill="#6fd5c1"/><rect x="961.94" y="263.66" width="19.5" height="2.64" fill="#8177f8"/><rect x="961.94" y="261.01" width="19.5" height="2.64" fill="#a6e8fc"/><rect x="961.94" y="253.50" width="19.5" height="7.51" fill="#00a3fc"/><rect x="961.94" y="249.27" width="19.5" height="4.23" fill="#fdcc8b"/><rect x="961.94" y="246.20" width="19.5" height="3.07" fill="#d8a8f4"/><text transform="translate(973.39,537.0) rotate(-39)" text-anchor="end" class="xl">18 mars 2025</text><rect x="989.28" y="516.53" width="19.5" height="3.87" fill="#d8a8f4"/><rect x="989.28" y="515.07" width="19.5" height="1.45" fill="#bfd8ea"/><rect x="989.28" y="511.20" width="19.5" height="3.87" fill="#b2b7fb"/><rect x="989.28" y="493.90" width="19.5" height="17.30" fill="#a4e6fc"/><rect x="989.28" y="462.50" width="19.5" height="31.40" fill="#fdb0b0"/><rect x="989.28" y="453.80" width="19.5" height="8.70" fill="#fdcc8b"/><rect x="989.28" y="424.00" width="19.5" height="29.80" fill="#fccbfd"/><rect x="989.28" y="418.07" width="19.5" height="5.93" fill="#a6f4d2"/><rect x="989.28" y="417.08" width="19.5" height="0.99" fill="#6fd5c1"/><rect x="989.28" y="410.16" width="19.5" height="6.92" fill="#8177f8"/><rect x="989.28" y="401.16" width="19.5" height="9.00" fill="#b2b7fb"/><rect x="989.28" y="400.18" width="19.5" height="0.99" fill="#a6e8fc"/><rect x="989.28" y="398.20" width="19.5" height="1.98" fill="#00a3fc"/><rect x="989.28" y="397.21" width="19.5" height="0.99" fill="#fdcc8b"/><rect x="989.28" y="391.28" width="19.5" height="5.93" fill="#d97ef6"/><rect x="989.28" y="385.35" width="19.5" height="5.93" fill="#a6f4d2"/><rect x="989.28" y="380.91" width="19.5" height="4.45" fill="#8177f8"/><rect x="989.28" y="379.62" width="19.5" height="1.28" fill="#a6e8fc"/><rect x="989.28" y="374.38" width="19.5" height="5.24" fill="#00a3fc"/><rect x="989.28" y="373.00" width="19.5" height="1.38" fill="#fcc8b8"/><rect x="989.28" y="332.70" width="19.5" height="40.30" fill="#fdcc8b"/><rect x="989.28" y="326.77" width="19.5" height="5.93" fill="#fccbfd"/><rect x="989.28" y="322.82" width="19.5" height="3.95" fill="#d8a8f4"/><rect x="989.28" y="321.59" width="19.5" height="1.23" fill="#6fd5c1"/><rect x="989.28" y="318.50" width="19.5" height="3.09" fill="#8c9ff6"/><rect x="989.28" y="303.80" width="19.5" height="14.70" fill="#fbf5c7"/><rect x="989.28" y="302.70" width="19.5" height="1.10" fill="#a6e8fc"/><rect x="989.28" y="301.80" width="19.5" height="0.90" fill="#d97ef6"/><rect x="989.28" y="268.50" width="19.5" height="33.30" fill="#8177f8"/><rect x="989.28" y="266.11" width="19.5" height="2.39" fill="#fcc8b8"/><rect x="989.28" y="263.72" width="19.5" height="2.39" fill="#d8a8f4"/><rect x="989.28" y="259.15" width="19.5" height="4.57" fill="#6fd5c1"/><rect x="989.28" y="256.43" width="19.5" height="2.72" fill="#8177f8"/><rect x="989.28" y="253.72" width="19.5" height="2.72" fill="#a6e8fc"/><rect x="989.28" y="246.00" width="19.5" height="7.72" fill="#00a3fc"/><rect x="989.28" y="241.65" width="19.5" height="4.35" fill="#fdcc8b"/><rect x="989.28" y="238.50" width="19.5" height="3.15" fill="#d8a8f4"/><text transform="translate(1000.73,537.0) rotate(-39)" text-anchor="end" class="xl">19 mars 2025</text><rect x="1016.61" y="516.53" width="19.5" height="3.87" fill="#d8a8f4"/><rect x="1016.61" y="515.07" width="19.5" height="1.45" fill="#bfd8ea"/><rect x="1016.61" y="511.20" width="19.5" height="3.87" fill="#b2b7fb"/><rect x="1016.61" y="492.90" width="19.5" height="18.30" fill="#a4e6fc"/><rect x="1016.61" y="459.90" width="19.5" height="33.00" fill="#fdb0b0"/><rect x="1016.61" y="450.80" width="19.5" height="9.10" fill="#fdcc8b"/><rect x="1016.61" y="421.60" width="19.5" height="29.20" fill="#fccbfd"/><rect x="1016.61" y="415.29" width="19.5" height="6.31" fill="#a6f4d2"/><rect x="1016.61" y="414.24" width="19.5" height="1.05" fill="#6fd5c1"/><rect x="1016.61" y="406.88" width="19.5" height="7.36" fill="#8177f8"/><rect x="1016.61" y="397.88" width="19.5" height="9.00" fill="#b2b7fb"/><rect x="1016.61" y="396.82" width="19.5" height="1.05" fill="#a6e8fc"/><rect x="1016.61" y="394.72" width="19.5" height="2.10" fill="#00a3fc"/><rect x="1016.61" y="393.67" width="19.5" height="1.05" fill="#fdcc8b"/><rect x="1016.61" y="387.36" width="19.5" height="6.31" fill="#d97ef6"/><rect x="1016.61" y="381.05" width="19.5" height="6.31" fill="#a6f4d2"/><rect x="1016.61" y="376.31" width="19.5" height="4.73" fill="#8177f8"/><rect x="1016.61" y="374.95" width="19.5" height="1.37" fill="#a6e8fc"/><rect x="1016.61" y="369.37" width="19.5" height="5.57" fill="#00a3fc"/><rect x="1016.61" y="367.90" width="19.5" height="1.47" fill="#fcc8b8"/><rect x="1016.61" y="327.70" width="19.5" height="40.20" fill="#fdcc8b"/><rect x="1016.61" y="322.61" width="19.5" height="5.09" fill="#fccbfd"/><rect x="1016.61" y="319.21" width="19.5" height="3.39" fill="#d8a8f4"/><rect x="1016.61" y="318.15" width="19.5" height="1.06" fill="#6fd5c1"/><rect x="1016.61" y="315.50" width="19.5" height="2.65" fill="#8c9ff6"/><rect x="1016.61" y="301.70" width="19.5" height="13.80" fill="#fbf5c7"/><rect x="1016.61" y="300.60" width="19.5" height="1.10" fill="#a6e8fc"/><rect x="1016.61" y="299.70" width="19.5" height="0.90" fill="#d97ef6"/><rect x="1016.61" y="263.80" width="19.5" height="35.90" fill="#8177f8"/><rect x="1016.61" y="261.57" width="19.5" height="2.23" fill="#fcc8b8"/><rect x="1016.61" y="259.34" width="19.5" height="2.23" fill="#d8a8f4"/><rect x="1016.61" y="255.08" width="19.5" height="4.26" fill="#6fd5c1"/><rect x="1016.61" y="252.54" width="19.5" height="2.54" fill="#8177f8"/><rect x="1016.61" y="250.00" width="19.5" height="2.54" fill="#a6e8fc"/><rect x="1016.61" y="242.80" width="19.5" height="7.20" fill="#00a3fc"/><rect x="1016.61" y="238.74" width="19.5" height="4.06" fill="#fdcc8b"/><rect x="1016.61" y="235.80" width="19.5" height="2.94" fill="#d8a8f4"/><rect x="1016.61" y="232.80" width="19.5" height="3.00" fill="#a6e8fc"/><text transform="translate(1028.06,537.0) rotate(-39)" text-anchor="end" class="xl">20 mars 2025</text><rect x="1043.94" y="516.53" width="19.5" height="3.87" fill="#d8a8f4"/><rect x="1043.94" y="515.07" width="19.5" height="1.45" fill="#bfd8ea"/><rect x="1043.94" y="511.20" width="19.5" height="3.87" fill="#b2b7fb"/><rect x="1043.94" y="493.50" width="19.5" height="17.70" fill="#a4e6fc"/><rect x="1043.94" y="462.50" width="19.5" height="31.00" fill="#fdb0b0"/><rect x="1043.94" y="453.80" width="19.5" height="8.70" fill="#fdcc8b"/><rect x="1043.94" y="425.00" width="19.5" height="28.80" fill="#fccbfd"/><rect x="1043.94" y="418.65" width="19.5" height="6.35" fill="#a6f4d2"/><rect x="1043.94" y="417.59" width="19.5" height="1.06" fill="#6fd5c1"/><rect x="1043.94" y="410.18" width="19.5" height="7.41" fill="#8177f8"/><rect x="1043.94" y="402.18" width="19.5" height="8.00" fill="#b2b7fb"/><rect x="1043.94" y="401.12" width="19.5" height="1.06" fill="#a6e8fc"/><rect x="1043.94" y="399.00" width="19.5" height="2.12" fill="#00a3fc"/><rect x="1043.94" y="397.94" width="19.5" height="1.06" fill="#fdcc8b"/><rect x="1043.94" y="391.59" width="19.5" height="6.35" fill="#d97ef6"/><rect x="1043.94" y="385.24" width="19.5" height="6.35" fill="#a6f4d2"/><rect x="1043.94" y="380.47" width="19.5" height="4.76" fill="#8177f8"/><rect x="1043.94" y="379.09" width="19.5" height="1.38" fill="#a6e8fc"/><rect x="1043.94" y="373.48" width="19.5" height="5.61" fill="#00a3fc"/><rect x="1043.94" y="372.00" width="19.5" height="1.48" fill="#fcc8b8"/><rect x="1043.94" y="331.70" width="19.5" height="40.30" fill="#fdcc8b"/><rect x="1043.94" y="327.32" width="19.5" height="4.38" fill="#fccbfd"/><rect x="1043.94" y="324.40" width="19.5" height="2.92" fill="#d8a8f4"/><rect x="1043.94" y="323.48" width="19.5" height="0.91" fill="#6fd5c1"/><rect x="1043.94" y="321.20" width="19.5" height="2.28" fill="#8c9ff6"/><rect x="1043.94" y="307.00" width="19.5" height="14.20" fill="#fbf5c7"/><rect x="1043.94" y="305.90" width="19.5" height="1.10" fill="#a6e8fc"/><rect x="1043.94" y="305.00" width="19.5" height="0.90" fill="#d97ef6"/><rect x="1043.94" y="265.20" width="19.5" height="39.80" fill="#8177f8"/><rect x="1043.94" y="262.98" width="19.5" height="2.22" fill="#fcc8b8"/><rect x="1043.94" y="260.77" width="19.5" height="2.22" fill="#d8a8f4"/><rect x="1043.94" y="256.54" width="19.5" height="4.23" fill="#6fd5c1"/><rect x="1043.94" y="254.02" width="19.5" height="2.52" fill="#8177f8"/><rect x="1043.94" y="251.50" width="19.5" height="2.52" fill="#a6e8fc"/><rect x="1043.94" y="244.35" width="19.5" height="7.15" fill="#00a3fc"/><rect x="1043.94" y="240.32" width="19.5" height="4.03" fill="#fdcc8b"/><rect x="1043.94" y="237.40" width="19.5" height="2.92" fill="#d8a8f4"/><rect x="1043.94" y="234.40" width="19.5" height="3.00" fill="#a6e8fc"/><text transform="translate(1055.39,537.0) rotate(-39)" text-anchor="end" class="xl">21 mars 2025</text><rect x="1071.28" y="517.37" width="19.5" height="3.03" fill="#d8a8f4"/><rect x="1071.28" y="516.23" width="19.5" height="1.14" fill="#bfd8ea"/><rect x="1071.28" y="513.20" width="19.5" height="3.03" fill="#b2b7fb"/><rect x="1071.28" y="497.40" width="19.5" height="15.80" fill="#a4e6fc"/><rect x="1071.28" y="475.30" width="19.5" height="22.10" fill="#fdb0b0"/><rect x="1071.28" y="466.60" width="19.5" height="8.70" fill="#fdcc8b"/><rect x="1071.28" y="440.60" width="19.5" height="26.00" fill="#fccbfd"/><rect x="1071.28" y="435.12" width="19.5" height="5.48" fill="#a6f4d2"/><rect x="1071.28" y="434.21" width="19.5" height="0.91" fill="#6fd5c1"/><rect x="1071.28" y="427.82" width="19.5" height="6.39" fill="#8177f8"/><rect x="1071.28" y="420.82" width="19.5" height="7.00" fill="#b2b7fb"/><rect x="1071.28" y="419.91" width="19.5" height="0.91" fill="#a6e8fc"/><rect x="1071.28" y="418.08" width="19.5" height="1.83" fill="#00a3fc"/><rect x="1071.28" y="417.17" width="19.5" height="0.91" fill="#fdcc8b"/><rect x="1071.28" y="411.69" width="19.5" height="5.48" fill="#d97ef6"/><rect x="1071.28" y="406.21" width="19.5" height="5.48" fill="#a6f4d2"/><rect x="1071.28" y="402.10" width="19.5" height="4.11" fill="#8177f8"/><rect x="1071.28" y="400.92" width="19.5" height="1.19" fill="#a6e8fc"/><rect x="1071.28" y="396.08" width="19.5" height="4.84" fill="#00a3fc"/><rect x="1071.28" y="394.80" width="19.5" height="1.28" fill="#fcc8b8"/><rect x="1071.28" y="354.00" width="19.5" height="40.80" fill="#fdcc8b"/><rect x="1071.28" y="350.20" width="19.5" height="3.80" fill="#fccbfd"/><rect x="1071.28" y="347.67" width="19.5" height="2.53" fill="#d8a8f4"/><rect x="1071.28" y="346.88" width="19.5" height="0.79" fill="#6fd5c1"/><rect x="1071.28" y="344.90" width="19.5" height="1.98" fill="#8c9ff6"/><rect x="1071.28" y="332.70" width="19.5" height="12.20" fill="#fbf5c7"/><rect x="1071.28" y="331.60" width="19.5" height="1.10" fill="#a6e8fc"/><rect x="1071.28" y="330.70" width="19.5" height="0.90" fill="#d97ef6"/><rect x="1071.28" y="307.40" width="19.5" height="23.30" fill="#8177f8"/><rect x="1071.28" y="305.70" width="19.5" height="1.70" fill="#fcc8b8"/><rect x="1071.28" y="304.00" width="19.5" height="1.70" fill="#d8a8f4"/><rect x="1071.28" y="300.76" width="19.5" height="3.24" fill="#6fd5c1"/><rect x="1071.28" y="298.83" width="19.5" height="1.93" fill="#8177f8"/><rect x="1071.28" y="296.90" width="19.5" height="1.93" fill="#a6e8fc"/><rect x="1071.28" y="291.43" width="19.5" height="5.48" fill="#00a3fc"/><rect x="1071.28" y="288.34" width="19.5" height="3.09" fill="#fdcc8b"/><rect x="1071.28" y="286.10" width="19.5" height="2.24" fill="#d8a8f4"/><text transform="translate(1082.73,537.0) rotate(-39)" text-anchor="end" class="xl">22 mars 2025</text><rect x="1098.61" y="517.54" width="19.5" height="2.86" fill="#d8a8f4"/><rect x="1098.61" y="516.46" width="19.5" height="1.07" fill="#bfd8ea"/><rect x="1098.61" y="513.60" width="19.5" height="2.86" fill="#b2b7fb"/><rect x="1098.61" y="498.40" width="19.5" height="15.20" fill="#a4e6fc"/><rect x="1098.61" y="476.30" width="19.5" height="22.10" fill="#fdb0b0"/><rect x="1098.61" y="467.60" width="19.5" height="8.70" fill="#fdcc8b"/><rect x="1098.61" y="442.30" width="19.5" height="25.30" fill="#fccbfd"/><rect x="1098.61" y="436.74" width="19.5" height="5.56" fill="#a6f4d2"/><rect x="1098.61" y="435.81" width="19.5" height="0.93" fill="#6fd5c1"/><rect x="1098.61" y="429.32" width="19.5" height="6.49" fill="#8177f8"/><rect x="1098.61" y="422.32" width="19.5" height="7.00" fill="#b2b7fb"/><rect x="1098.61" y="421.39" width="19.5" height="0.93" fill="#a6e8fc"/><rect x="1098.61" y="419.54" width="19.5" height="1.85" fill="#00a3fc"/><rect x="1098.61" y="418.61" width="19.5" height="0.93" fill="#fdcc8b"/><rect x="1098.61" y="413.05" width="19.5" height="5.56" fill="#d97ef6"/><rect x="1098.61" y="407.49" width="19.5" height="5.56" fill="#a6f4d2"/><rect x="1098.61" y="403.32" width="19.5" height="4.17" fill="#8177f8"/><rect x="1098.61" y="402.11" width="19.5" height="1.21" fill="#a6e8fc"/><rect x="1098.61" y="397.20" width="19.5" height="4.91" fill="#00a3fc"/><rect x="1098.61" y="395.90" width="19.5" height="1.30" fill="#fcc8b8"/><rect x="1098.61" y="355.60" width="19.5" height="40.30" fill="#fdcc8b"/><rect x="1098.61" y="351.55" width="19.5" height="4.05" fill="#fccbfd"/><rect x="1098.61" y="348.85" width="19.5" height="2.70" fill="#d8a8f4"/><rect x="1098.61" y="348.01" width="19.5" height="0.84" fill="#6fd5c1"/><rect x="1098.61" y="345.90" width="19.5" height="2.11" fill="#8c9ff6"/><rect x="1098.61" y="333.70" width="19.5" height="12.20" fill="#fbf5c7"/><rect x="1098.61" y="332.60" width="19.5" height="1.10" fill="#a6e8fc"/><rect x="1098.61" y="331.70" width="19.5" height="0.90" fill="#d97ef6"/><rect x="1098.61" y="307.40" width="19.5" height="24.30" fill="#8177f8"/><rect x="1098.61" y="305.70" width="19.5" height="1.70" fill="#fcc8b8"/><rect x="1098.61" y="304.00" width="19.5" height="1.70" fill="#d8a8f4"/><rect x="1098.61" y="300.76" width="19.5" height="3.24" fill="#6fd5c1"/><rect x="1098.61" y="298.83" width="19.5" height="1.93" fill="#8177f8"/><rect x="1098.61" y="296.90" width="19.5" height="1.93" fill="#a6e8fc"/><rect x="1098.61" y="291.43" width="19.5" height="5.48" fill="#00a3fc"/><rect x="1098.61" y="288.34" width="19.5" height="3.09" fill="#fdcc8b"/><rect x="1098.61" y="286.10" width="19.5" height="2.24" fill="#d8a8f4"/><rect x="1098.61" y="283.10" width="19.5" height="3.00" fill="#a6e8fc"/><text transform="translate(1110.06,537.0) rotate(-39)" text-anchor="end" class="xl">23 mars 2025</text><rect x="1125.94" y="516.95" width="19.5" height="3.45" fill="#d8a8f4"/><rect x="1125.94" y="515.65" width="19.5" height="1.29" fill="#bfd8ea"/><rect x="1125.94" y="512.20" width="19.5" height="3.45" fill="#b2b7fb"/><rect x="1125.94" y="495.00" width="19.5" height="17.20" fill="#a4e6fc"/><rect x="1125.94" y="466.60" width="19.5" height="28.40" fill="#fdb0b0"/><rect x="1125.94" y="457.50" width="19.5" height="9.10" fill="#fdcc8b"/><rect x="1125.94" y="429.70" width="19.5" height="27.80" fill="#fccbfd"/><rect x="1125.94" y="423.97" width="19.5" height="5.73" fill="#a6f4d2"/><rect x="1125.94" y="423.01" width="19.5" height="0.96" fill="#6fd5c1"/><rect x="1125.94" y="416.33" width="19.5" height="6.69" fill="#8177f8"/><rect x="1125.94" y="408.33" width="19.5" height="8.00" fill="#b2b7fb"/><rect x="1125.94" y="407.37" width="19.5" height="0.96" fill="#a6e8fc"/><rect x="1125.94" y="405.46" width="19.5" height="1.91" fill="#00a3fc"/><rect x="1125.94" y="404.50" width="19.5" height="0.96" fill="#fdcc8b"/><rect x="1125.94" y="398.77" width="19.5" height="5.73" fill="#d97ef6"/><rect x="1125.94" y="393.04" width="19.5" height="5.73" fill="#a6f4d2"/><rect x="1125.94" y="388.74" width="19.5" height="4.30" fill="#8177f8"/><rect x="1125.94" y="387.50" width="19.5" height="1.24" fill="#a6e8fc"/><rect x="1125.94" y="382.44" width="19.5" height="5.06" fill="#00a3fc"/><rect x="1125.94" y="381.10" width="19.5" height="1.34" fill="#fcc8b8"/><rect x="1125.94" y="341.20" width="19.5" height="39.90" fill="#fdcc8b"/><rect x="1125.94" y="336.23" width="19.5" height="4.97" fill="#fccbfd"/><rect x="1125.94" y="332.92" width="19.5" height="3.31" fill="#d8a8f4"/><rect x="1125.94" y="331.89" width="19.5" height="1.03" fill="#6fd5c1"/><rect x="1125.94" y="329.30" width="19.5" height="2.59" fill="#8c9ff6"/><rect x="1125.94" y="315.90" width="19.5" height="13.40" fill="#fbf5c7"/><rect x="1125.94" y="314.80" width="19.5" height="1.10" fill="#a6e8fc"/><rect x="1125.94" y="313.90" width="19.5" height="0.90" fill="#d97ef6"/><rect x="1125.94" y="278.00" width="19.5" height="35.90" fill="#8177f8"/><rect x="1125.94" y="275.95" width="19.5" height="2.05" fill="#fcc8b8"/><rect x="1125.94" y="273.90" width="19.5" height="2.05" fill="#d8a8f4"/><rect x="1125.94" y="269.99" width="19.5" height="3.91" fill="#6fd5c1"/><rect x="1125.94" y="267.66" width="19.5" height="2.33" fill="#8177f8"/><rect x="1125.94" y="265.34" width="19.5" height="2.33" fill="#a6e8fc"/><rect x="1125.94" y="258.73" width="19.5" height="6.61" fill="#00a3fc"/><rect x="1125.94" y="255.00" width="19.5" height="3.72" fill="#fdcc8b"/><rect x="1125.94" y="252.30" width="19.5" height="2.70" fill="#d8a8f4"/><text transform="translate(1137.39,537.0) rotate(-39)" text-anchor="end" class="xl">24 mars 2025</text><rect x="1153.28" y="516.53" width="19.5" height="3.87" fill="#d8a8f4"/><rect x="1153.28" y="515.07" width="19.5" height="1.45" fill="#bfd8ea"/><rect x="1153.28" y="511.20" width="19.5" height="3.87" fill="#b2b7fb"/><rect x="1153.28" y="492.50" width="19.5" height="18.70" fill="#a4e6fc"/><rect x="1153.28" y="462.50" width="19.5" height="30.00" fill="#fdb0b0"/><rect x="1153.28" y="453.80" width="19.5" height="8.70" fill="#fdcc8b"/><rect x="1153.28" y="425.00" width="19.5" height="28.80" fill="#fccbfd"/><rect x="1153.28" y="419.08" width="19.5" height="5.92" fill="#a6f4d2"/><rect x="1153.28" y="418.10" width="19.5" height="0.99" fill="#6fd5c1"/><rect x="1153.28" y="411.20" width="19.5" height="6.90" fill="#8177f8"/><rect x="1153.28" y="404.00" width="19.5" height="7.20" fill="#b2b7fb"/><rect x="1153.28" y="403.01" width="19.5" height="0.99" fill="#a6e8fc"/><rect x="1153.28" y="401.04" width="19.5" height="1.97" fill="#00a3fc"/><rect x="1153.28" y="400.05" width="19.5" height="0.99" fill="#fdcc8b"/><rect x="1153.28" y="394.14" width="19.5" height="5.92" fill="#d97ef6"/><rect x="1153.28" y="388.22" width="19.5" height="5.92" fill="#a6f4d2"/><rect x="1153.28" y="383.79" width="19.5" height="4.44" fill="#8177f8"/><rect x="1153.28" y="382.51" width="19.5" height="1.28" fill="#a6e8fc"/><rect x="1153.28" y="377.28" width="19.5" height="5.23" fill="#00a3fc"/><rect x="1153.28" y="375.90" width="19.5" height="1.38" fill="#fcc8b8"/><rect x="1153.28" y="335.80" width="19.5" height="40.10" fill="#fdcc8b"/><rect x="1153.28" y="331.54" width="19.5" height="4.26" fill="#fccbfd"/><rect x="1153.28" y="328.70" width="19.5" height="2.84" fill="#d8a8f4"/><rect x="1153.28" y="327.82" width="19.5" height="0.89" fill="#6fd5c1"/><rect x="1153.28" y="325.60" width="19.5" height="2.22" fill="#8c9ff6"/><rect x="1153.28" y="312.50" width="19.5" height="13.10" fill="#fbf5c7"/><rect x="1153.28" y="311.40" width="19.5" height="1.10" fill="#a6e8fc"/><rect x="1153.28" y="310.50" width="19.5" height="0.90" fill="#d97ef6"/><rect x="1153.28" y="268.90" width="19.5" height="41.60" fill="#8177f8"/><rect x="1153.28" y="266.56" width="19.5" height="2.34" fill="#fcc8b8"/><rect x="1153.28" y="264.21" width="19.5" height="2.34" fill="#d8a8f4"/><rect x="1153.28" y="259.74" width="19.5" height="4.47" fill="#6fd5c1"/><rect x="1153.28" y="257.08" width="19.5" height="2.66" fill="#8177f8"/><rect x="1153.28" y="254.41" width="19.5" height="2.66" fill="#a6e8fc"/><rect x="1153.28" y="246.85" width="19.5" height="7.56" fill="#00a3fc"/><rect x="1153.28" y="242.59" width="19.5" height="4.26" fill="#fdcc8b"/><rect x="1153.28" y="239.50" width="19.5" height="3.09" fill="#d8a8f4"/><text transform="translate(1164.73,537.0) rotate(-39)" text-anchor="end" class="xl">25 mars 2025</text><rect x="1180.61" y="516.53" width="19.5" height="3.87" fill="#d8a8f4"/><rect x="1180.61" y="515.07" width="19.5" height="1.45" fill="#bfd8ea"/><rect x="1180.61" y="511.20" width="19.5" height="3.87" fill="#b2b7fb"/><rect x="1180.61" y="491.90" width="19.5" height="19.30" fill="#a4e6fc"/><rect x="1180.61" y="461.10" width="19.5" height="30.80" fill="#fdb0b0"/><rect x="1180.61" y="452.00" width="19.5" height="9.10" fill="#fdcc8b"/><rect x="1180.61" y="424.00" width="19.5" height="28.00" fill="#fccbfd"/><rect x="1180.61" y="417.99" width="19.5" height="6.01" fill="#a6f4d2"/><rect x="1180.61" y="416.98" width="19.5" height="1.00" fill="#6fd5c1"/><rect x="1180.61" y="409.97" width="19.5" height="7.02" fill="#8177f8"/><rect x="1180.61" y="401.97" width="19.5" height="8.00" fill="#b2b7fb"/><rect x="1180.61" y="400.96" width="19.5" height="1.00" fill="#a6e8fc"/><rect x="1180.61" y="398.96" width="19.5" height="2.00" fill="#00a3fc"/><rect x="1180.61" y="397.96" width="19.5" height="1.00" fill="#fdcc8b"/><rect x="1180.61" y="391.94" width="19.5" height="6.01" fill="#d97ef6"/><rect x="1180.61" y="385.93" width="19.5" height="6.01" fill="#a6f4d2"/><rect x="1180.61" y="381.42" width="19.5" height="4.51" fill="#8177f8"/><rect x="1180.61" y="380.12" width="19.5" height="1.30" fill="#a6e8fc"/><rect x="1180.61" y="374.80" width="19.5" height="5.31" fill="#00a3fc"/><rect x="1180.61" y="373.40" width="19.5" height="1.40" fill="#fcc8b8"/><rect x="1180.61" y="333.10" width="19.5" height="40.30" fill="#fdcc8b"/><rect x="1180.61" y="329.30" width="19.5" height="3.80" fill="#fccbfd"/><rect x="1180.61" y="326.77" width="19.5" height="2.53" fill="#d8a8f4"/><rect x="1180.61" y="325.98" width="19.5" height="0.79" fill="#6fd5c1"/><rect x="1180.61" y="324.00" width="19.5" height="1.98" fill="#8c9ff6"/><rect x="1180.61" y="311.40" width="19.5" height="12.60" fill="#fbf5c7"/><rect x="1180.61" y="310.30" width="19.5" height="1.10" fill="#a6e8fc"/><rect x="1180.61" y="309.40" width="19.5" height="0.90" fill="#d97ef6"/><rect x="1180.61" y="271.90" width="19.5" height="37.50" fill="#8177f8"/><rect x="1180.61" y="269.72" width="19.5" height="2.18" fill="#fcc8b8"/><rect x="1180.61" y="267.53" width="19.5" height="2.18" fill="#d8a8f4"/><rect x="1180.61" y="263.36" width="19.5" height="4.17" fill="#6fd5c1"/><rect x="1180.61" y="260.88" width="19.5" height="2.48" fill="#8177f8"/><rect x="1180.61" y="258.40" width="19.5" height="2.48" fill="#a6e8fc"/><rect x="1180.61" y="251.35" width="19.5" height="7.05" fill="#00a3fc"/><rect x="1180.61" y="247.38" width="19.5" height="3.97" fill="#fdcc8b"/><rect x="1180.61" y="244.50" width="19.5" height="2.88" fill="#d8a8f4"/><rect x="1180.61" y="241.50" width="19.5" height="3.00" fill="#a6e8fc"/><text transform="translate(1192.06,537.0) rotate(-39)" text-anchor="end" class="xl">26 mars 2025</text><rect x="1207.94" y="516.95" width="19.5" height="3.45" fill="#d8a8f4"/><rect x="1207.94" y="515.65" width="19.5" height="1.29" fill="#bfd8ea"/><rect x="1207.94" y="512.20" width="19.5" height="3.45" fill="#b2b7fb"/><rect x="1207.94" y="493.90" width="19.5" height="18.30" fill="#a4e6fc"/><rect x="1207.94" y="462.50" width="19.5" height="31.40" fill="#fdb0b0"/><rect x="1207.94" y="453.80" width="19.5" height="8.70" fill="#fdcc8b"/><rect x="1207.94" y="425.00" width="19.5" height="28.80" fill="#fccbfd"/><rect x="1207.94" y="418.90" width="19.5" height="6.10" fill="#a6f4d2"/><rect x="1207.94" y="417.88" width="19.5" height="1.02" fill="#6fd5c1"/><rect x="1207.94" y="410.77" width="19.5" height="7.12" fill="#8177f8"/><rect x="1207.94" y="403.77" width="19.5" height="7.00" fill="#b2b7fb"/><rect x="1207.94" y="402.75" width="19.5" height="1.02" fill="#a6e8fc"/><rect x="1207.94" y="400.72" width="19.5" height="2.03" fill="#00a3fc"/><rect x="1207.94" y="399.70" width="19.5" height="1.02" fill="#fdcc8b"/><rect x="1207.94" y="393.60" width="19.5" height="6.10" fill="#d97ef6"/><rect x="1207.94" y="387.51" width="19.5" height="6.10" fill="#a6f4d2"/><rect x="1207.94" y="382.93" width="19.5" height="4.57" fill="#8177f8"/><rect x="1207.94" y="381.61" width="19.5" height="1.32" fill="#a6e8fc"/><rect x="1207.94" y="376.22" width="19.5" height="5.39" fill="#00a3fc"/><rect x="1207.94" y="374.80" width="19.5" height="1.42" fill="#fcc8b8"/><rect x="1207.94" y="334.80" width="19.5" height="40.00" fill="#fdcc8b"/><rect x="1207.94" y="330.79" width="19.5" height="4.01" fill="#fccbfd"/><rect x="1207.94" y="328.12" width="19.5" height="2.67" fill="#d8a8f4"/><rect x="1207.94" y="327.29" width="19.5" height="0.83" fill="#6fd5c1"/><rect x="1207.94" y="325.20" width="19.5" height="2.09" fill="#8c9ff6"/><rect x="1207.94" y="311.40" width="19.5" height="13.80" fill="#fbf5c7"/><rect x="1207.94" y="310.30" width="19.5" height="1.10" fill="#a6e8fc"/><rect x="1207.94" y="309.40" width="19.5" height="0.90" fill="#d97ef6"/><rect x="1207.94" y="263.20" width="19.5" height="46.20" fill="#8177f8"/><rect x="1207.94" y="261.18" width="19.5" height="2.02" fill="#fcc8b8"/><rect x="1207.94" y="259.17" width="19.5" height="2.02" fill="#d8a8f4"/><rect x="1207.94" y="255.32" width="19.5" height="3.85" fill="#6fd5c1"/><rect x="1207.94" y="253.03" width="19.5" height="2.29" fill="#8177f8"/><rect x="1207.94" y="250.73" width="19.5" height="2.29" fill="#a6e8fc"/><rect x="1207.94" y="244.23" width="19.5" height="6.51" fill="#00a3fc"/><rect x="1207.94" y="240.56" width="19.5" height="3.67" fill="#fdcc8b"/><rect x="1207.94" y="237.90" width="19.5" height="2.66" fill="#d8a8f4"/><rect x="1207.94" y="234.90" width="19.5" height="3.00" fill="#a6e8fc"/><text transform="translate(1219.39,537.0) rotate(-39)" text-anchor="end" class="xl">27 mars 2025</text><rect x="1235.27" y="516.53" width="19.5" height="3.87" fill="#d8a8f4"/><rect x="1235.27" y="515.07" width="19.5" height="1.45" fill="#bfd8ea"/><rect x="1235.27" y="511.20" width="19.5" height="3.87" fill="#b2b7fb"/><rect x="1235.27" y="491.90" width="19.5" height="19.30" fill="#a4e6fc"/><rect x="1235.27" y="461.10" width="19.5" height="30.80" fill="#fdb0b0"/><rect x="1235.27" y="452.00" width="19.5" height="9.10" fill="#fdcc8b"/><rect x="1235.27" y="424.00" width="19.5" height="28.00" fill="#fccbfd"/><rect x="1235.27" y="418.04" width="19.5" height="5.96" fill="#a6f4d2"/><rect x="1235.27" y="417.05" width="19.5" height="0.99" fill="#6fd5c1"/><rect x="1235.27" y="410.10" width="19.5" height="6.95" fill="#8177f8"/><rect x="1235.27" y="401.40" width="19.5" height="8.70" fill="#b2b7fb"/><rect x="1235.27" y="400.41" width="19.5" height="0.99" fill="#a6e8fc"/><rect x="1235.27" y="398.42" width="19.5" height="1.99" fill="#00a3fc"/><rect x="1235.27" y="397.43" width="19.5" height="0.99" fill="#fdcc8b"/><rect x="1235.27" y="391.47" width="19.5" height="5.96" fill="#d97ef6"/><rect x="1235.27" y="385.51" width="19.5" height="5.96" fill="#a6f4d2"/><rect x="1235.27" y="381.04" width="19.5" height="4.47" fill="#8177f8"/><rect x="1235.27" y="379.75" width="19.5" height="1.29" fill="#a6e8fc"/><rect x="1235.27" y="374.49" width="19.5" height="5.26" fill="#00a3fc"/><rect x="1235.27" y="373.10" width="19.5" height="1.39" fill="#fcc8b8"/><rect x="1235.27" y="333.10" width="19.5" height="40.00" fill="#fdcc8b"/><rect x="1235.27" y="328.72" width="19.5" height="4.38" fill="#fccbfd"/><rect x="1235.27" y="325.80" width="19.5" height="2.92" fill="#d8a8f4"/><rect x="1235.27" y="324.88" width="19.5" height="0.91" fill="#6fd5c1"/><rect x="1235.27" y="322.60" width="19.5" height="2.28" fill="#8c9ff6"/><rect x="1235.27" y="309.00" width="19.5" height="13.60" fill="#fbf5c7"/><rect x="1235.27" y="307.90" width="19.5" height="1.10" fill="#a6e8fc"/><rect x="1235.27" y="307.00" width="19.5" height="0.90" fill="#d97ef6"/><rect x="1235.27" y="262.80" width="19.5" height="44.20" fill="#8177f8"/><rect x="1235.27" y="260.70" width="19.5" height="2.10" fill="#fcc8b8"/><rect x="1235.27" y="258.61" width="19.5" height="2.10" fill="#d8a8f4"/><rect x="1235.27" y="254.61" width="19.5" height="4.00" fill="#6fd5c1"/><rect x="1235.27" y="252.22" width="19.5" height="2.38" fill="#8177f8"/><rect x="1235.27" y="249.84" width="19.5" height="2.38" fill="#a6e8fc"/><rect x="1235.27" y="243.07" width="19.5" height="6.77" fill="#00a3fc"/><rect x="1235.27" y="239.26" width="19.5" height="3.81" fill="#fdcc8b"/><rect x="1235.27" y="236.50" width="19.5" height="2.76" fill="#d8a8f4"/><text transform="translate(1246.72,537.0) rotate(-39)" text-anchor="end" class="xl">28 mars 2025</text><rect x="1262.61" y="517.37" width="19.5" height="3.03" fill="#d8a8f4"/><rect x="1262.61" y="516.23" width="19.5" height="1.14" fill="#bfd8ea"/><rect x="1262.61" y="513.20" width="19.5" height="3.03" fill="#b2b7fb"/><rect x="1262.61" y="493.90" width="19.5" height="19.30" fill="#a4e6fc"/><rect x="1262.61" y="471.60" width="19.5" height="22.30" fill="#fdb0b0"/><rect x="1262.61" y="463.10" width="19.5" height="8.50" fill="#fdcc8b"/><rect x="1262.61" y="436.20" width="19.5" height="26.90" fill="#fccbfd"/><rect x="1262.61" y="430.82" width="19.5" height="5.38" fill="#a6f4d2"/><rect x="1262.61" y="429.92" width="19.5" height="0.90" fill="#6fd5c1"/><rect x="1262.61" y="423.65" width="19.5" height="6.28" fill="#8177f8"/><rect x="1262.61" y="415.95" width="19.5" height="7.70" fill="#b2b7fb"/><rect x="1262.61" y="415.05" width="19.5" height="0.90" fill="#a6e8fc"/><rect x="1262.61" y="413.26" width="19.5" height="1.79" fill="#00a3fc"/><rect x="1262.61" y="412.36" width="19.5" height="0.90" fill="#fdcc8b"/><rect x="1262.61" y="406.98" width="19.5" height="5.38" fill="#d97ef6"/><rect x="1262.61" y="401.61" width="19.5" height="5.38" fill="#a6f4d2"/><rect x="1262.61" y="397.57" width="19.5" height="4.03" fill="#8177f8"/><rect x="1262.61" y="396.41" width="19.5" height="1.17" fill="#a6e8fc"/><rect x="1262.61" y="391.66" width="19.5" height="4.75" fill="#00a3fc"/><rect x="1262.61" y="390.40" width="19.5" height="1.26" fill="#fcc8b8"/><rect x="1262.61" y="350.40" width="19.5" height="40.00" fill="#fdcc8b"/><rect x="1262.61" y="346.39" width="19.5" height="4.01" fill="#fccbfd"/><rect x="1262.61" y="343.72" width="19.5" height="2.67" fill="#d8a8f4"/><rect x="1262.61" y="342.89" width="19.5" height="0.83" fill="#6fd5c1"/><rect x="1262.61" y="340.80" width="19.5" height="2.09" fill="#8c9ff6"/><rect x="1262.61" y="328.10" width="19.5" height="12.70" fill="#fbf5c7"/><rect x="1262.61" y="327.00" width="19.5" height="1.10" fill="#a6e8fc"/><rect x="1262.61" y="326.10" width="19.5" height="0.90" fill="#d97ef6"/><rect x="1262.61" y="297.70" width="19.5" height="28.40" fill="#8177f8"/><rect x="1262.61" y="296.13" width="19.5" height="1.57" fill="#fcc8b8"/><rect x="1262.61" y="294.56" width="19.5" height="1.57" fill="#d8a8f4"/><rect x="1262.61" y="291.56" width="19.5" height="3.00" fill="#6fd5c1"/><rect x="1262.61" y="289.78" width="19.5" height="1.78" fill="#8177f8"/><rect x="1262.61" y="287.99" width="19.5" height="1.78" fill="#a6e8fc"/><rect x="1262.61" y="282.92" width="19.5" height="5.07" fill="#00a3fc"/><rect x="1262.61" y="280.07" width="19.5" height="2.86" fill="#fdcc8b"/><rect x="1262.61" y="278.00" width="19.5" height="2.07" fill="#d8a8f4"/><text transform="translate(1274.06,537.0) rotate(-39)" text-anchor="end" class="xl">29 mars 2025</text><rect x="1289.94" y="517.37" width="19.5" height="3.03" fill="#d8a8f4"/><rect x="1289.94" y="516.23" width="19.5" height="1.14" fill="#bfd8ea"/><rect x="1289.94" y="513.20" width="19.5" height="3.03" fill="#b2b7fb"/><rect x="1289.94" y="494.50" width="19.5" height="18.70" fill="#a4e6fc"/><rect x="1289.94" y="472.70" width="19.5" height="21.80" fill="#fdb0b0"/><rect x="1289.94" y="464.60" width="19.5" height="8.10" fill="#fdcc8b"/><rect x="1289.94" y="438.20" width="19.5" height="26.40" fill="#fccbfd"/><rect x="1289.94" y="432.60" width="19.5" height="5.60" fill="#a6f4d2"/><rect x="1289.94" y="431.66" width="19.5" height="0.93" fill="#6fd5c1"/><rect x="1289.94" y="425.12" width="19.5" height="6.54" fill="#8177f8"/><rect x="1289.94" y="418.42" width="19.5" height="6.70" fill="#b2b7fb"/><rect x="1289.94" y="417.49" width="19.5" height="0.93" fill="#a6e8fc"/><rect x="1289.94" y="415.62" width="19.5" height="1.87" fill="#00a3fc"/><rect x="1289.94" y="414.69" width="19.5" height="0.93" fill="#fdcc8b"/><rect x="1289.94" y="409.08" width="19.5" height="5.60" fill="#d97ef6"/><rect x="1289.94" y="403.48" width="19.5" height="5.60" fill="#a6f4d2"/><rect x="1289.94" y="399.27" width="19.5" height="4.20" fill="#8177f8"/><rect x="1289.94" y="398.06" width="19.5" height="1.21" fill="#a6e8fc"/><rect x="1289.94" y="393.11" width="19.5" height="4.95" fill="#00a3fc"/><rect x="1289.94" y="391.80" width="19.5" height="1.31" fill="#fcc8b8"/><rect x="1289.94" y="352.00" width="19.5" height="39.80" fill="#fdcc8b"/><rect x="1289.94" y="348.20" width="19.5" height="3.80" fill="#fccbfd"/><rect x="1289.94" y="345.67" width="19.5" height="2.53" fill="#d8a8f4"/><rect x="1289.94" y="344.88" width="19.5" height="0.79" fill="#6fd5c1"/><rect x="1289.94" y="342.90" width="19.5" height="1.98" fill="#8c9ff6"/><rect x="1289.94" y="330.10" width="19.5" height="12.80" fill="#fbf5c7"/><rect x="1289.94" y="329.00" width="19.5" height="1.10" fill="#a6e8fc"/><rect x="1289.94" y="328.10" width="19.5" height="0.90" fill="#d97ef6"/><rect x="1289.94" y="300.90" width="19.5" height="27.20" fill="#8177f8"/><rect x="1289.94" y="299.37" width="19.5" height="1.53" fill="#fcc8b8"/><rect x="1289.94" y="297.84" width="19.5" height="1.53" fill="#d8a8f4"/><rect x="1289.94" y="294.92" width="19.5" height="2.92" fill="#6fd5c1"/><rect x="1289.94" y="293.18" width="19.5" height="1.74" fill="#8177f8"/><rect x="1289.94" y="291.44" width="19.5" height="1.74" fill="#a6e8fc"/><rect x="1289.94" y="286.50" width="19.5" height="4.94" fill="#00a3fc"/><rect x="1289.94" y="283.72" width="19.5" height="2.78" fill="#fdcc8b"/><rect x="1289.94" y="281.70" width="19.5" height="2.02" fill="#d8a8f4"/><text transform="translate(1301.39,537.0) rotate(-39)" text-anchor="end" class="xl">30 mars 2025</text></svg>

  <!-- TABLE CARD -->
  <div class="card" style="left:235px;top:621px;width:1298px;height:300px"></div>
  <div class="btn" style="left:252.5px;top:637.8px;width:86px;height:23.2px;line-height:21px">
    <svg class="abs" style="left:6px;top:6px" width="9" height="9" viewBox="0 0 9 9"><path d="M4.5 0.2 L8.6 2.2 V6.8 L4.5 8.8 L0.4 6.8 V2.2 Z" fill="#333"/><path d="M1 2.6 L4.5 4.4 L8 2.6 M4.5 4.4 V8.2 M2.6 1.5 L6.3 3.3" fill="none" stroke="#fff" stroke-width="0.7"/></svg>
    <span class="abs" style="left:20px;top:0">By Service</span>
    <svg class="abs" style="left:71px;top:9px" width="6" height="4" viewBox="0 0 6 4"><path d="M0.8 0.8 L3 3 L5.2 0.8" fill="none" stroke="#444" stroke-width="1"/></svg>
  </div>
  <div class="btn" style="left:341.3px;top:637.8px;width:78.5px;height:23.2px;line-height:21px">
    <svg class="abs" style="left:7px;top:6px" width="7" height="10" viewBox="0 0 7 10"><path d="M0.6 0.6 H4.6 L6.4 2.4 V9.4 H0.6 Z" fill="none" stroke="#333" stroke-width="1"/><circle cx="3.5" cy="5.6" r="2.1" fill="#333"/><path d="M3.5 7 V4.4 M2.5 5.3 L3.5 4.3 L4.5 5.3" fill="none" stroke="#fff" stroke-width="0.7"/></svg>
    <span class="abs" style="left:19.5px;top:0">Export CSV</span>
  </div>
  <div class="abs" style="left:1398px;top:638.5px;width:118.5px;height:22.5px;border:1px solid #e6e6e6;border-radius:3px;background:#fff"></div>
  <div class="abs" style="left:1398px;top:638.5px;width:66.5px;height:22.5px;border-radius:2px 0 0 2px;background:#5b3fe6;color:#fff;font-size:9.5px;line-height:22.5px;text-align:center">Cumulative</div>
  <div class="abs" style="left:1464.5px;top:638.5px;width:52px;height:22.5px;color:#333;font-size:9.5px;line-height:22.5px;text-align:center">By date</div>

  <div class="th" style="left:333.5px;top:693px">Cloud</div>
  <div class="th" style="left:404.3px;top:693px">Service</div>
  <div class="th" style="right:383.7px;top:685.8px">Accrued Costs</div>
  <div class="ths" style="right:383.7px;top:702.5px">02 to 30 mars 2025</div>
  <div class="th" style="right:171px;top:685.8px">Previous period</div>
  <div class="ths" style="right:171px;top:702.5px">02 févr. to 02 mars 2025</div>
  <div class="th" style="right:29.5px;top:693px">Change</div>
  <div class="abs" style="left:253px;top:721px;width:1263px;height:1px;background:#e3e3e3"></div>
  <div class="abs" style="left:963px;top:720px;width:199px;height:2px;background:#6b6b6b"></div>

  <div class="row" style="top:722px"><div class="cbtn"><svg class="abs" style="left:5.5px;top:5.5px" width="10" height="9" viewBox="0 0 10 9"><rect x="0.8" y="1" width="1.6" height="7" fill="#666"/><rect x="3.4" y="3.2" width="1.6" height="4.8" fill="#555"/><rect x="6.2" y="5.2" width="2.2" height="2.8" fill="#444"/><rect x="0.8" y="6.9" width="7.8" height="1.3" fill="#333"/></svg></div><svg class="abs" style="left:80px;top:10px" width="19" height="13" viewBox="0 0 19 13"><text x="0.8" y="7" font-family="Liberation Sans" font-size="11" fill="#2b3545" stroke="#2b3545" stroke-width="0.15" textLength="16.4" lengthAdjust="spacingAndGlyphs">aws</text><path d="M0.8 8.4 Q8.5 12.6 17 8.6" fill="none" stroke="#f90" stroke-width="1.2"/><path d="M15.3 8.3 L17.3 8.4 L16.9 10.1" fill="none" stroke="#f90" stroke-width="0.9"/></svg><div class="dot" style="top:10.3px;background:#fdcc8b"></div><div class="svc" style="top:11.3px;line-height:15px">ComputeSavingsPlans</div><div class="num" style="right:363.7px;top:11px;line-height:15px">$38,484.56</div><div class="num" style="right:151.5px;top:11px;line-height:15px">$2,654.11</div><div class="chg" style="right:9.5px;top:11px;line-height:15px">1,350%</div></div><div class="row alt" style="top:757px"><div class="cbtn"><svg class="abs" style="left:5.5px;top:5.5px" width="10" height="9" viewBox="0 0 10 9"><rect x="0.8" y="1" width="1.6" height="7" fill="#666"/><rect x="3.4" y="3.2" width="1.6" height="4.8" fill="#555"/><rect x="6.2" y="5.2" width="2.2" height="2.8" fill="#444"/><rect x="0.8" y="6.9" width="7.8" height="1.3" fill="#333"/></svg></div><svg class="abs" style="left:80px;top:10px" width="19" height="13" viewBox="0 0 19 13"><text x="0.8" y="7" font-family="Liberation Sans" font-size="11" fill="#2b3545" stroke="#2b3545" stroke-width="0.15" textLength="16.4" lengthAdjust="spacingAndGlyphs">aws</text><path d="M0.8 8.4 Q8.5 12.6 17 8.6" fill="none" stroke="#f90" stroke-width="1.2"/><path d="M15.3 8.3 L17.3 8.4 L16.9 10.1" fill="none" stroke="#f90" stroke-width="0.9"/></svg><div class="dot" style="top:10.3px;background:#8272f7"></div><div class="svc" style="top:11.3px;line-height:15px">Amazon Relational Database Service</div><div class="num" style="right:363.7px;top:11px;line-height:15px">$29,637.72</div><div class="num" style="right:151.5px;top:11px;line-height:15px">$1,363.11</div><div class="chg" style="right:9.5px;top:11px;line-height:15px">2,074.27%</div></div><div class="row" style="top:792px"><div class="cbtn"><svg class="abs" style="left:5.5px;top:5.5px" width="10" height="9" viewBox="0 0 10 9"><rect x="0.8" y="1" width="1.6" height="7" fill="#666"/><rect x="3.4" y="3.2" width="1.6" height="4.8" fill="#555"/><rect x="6.2" y="5.2" width="2.2" height="2.8" fill="#444"/><rect x="0.8" y="6.9" width="7.8" height="1.3" fill="#333"/></svg></div><svg class="abs" style="left:80px;top:10px" width="19" height="13" viewBox="0 0 19 13"><text x="0.8" y="7" font-family="Liberation Sans" font-size="11" fill="#2b3545" stroke="#2b3545" stroke-width="0.15" textLength="16.4" lengthAdjust="spacingAndGlyphs">aws</text><path d="M0.8 8.4 Q8.5 12.6 17 8.6" fill="none" stroke="#f90" stroke-width="1.2"/><path d="M15.3 8.3 L17.3 8.4 L16.9 10.1" fill="none" stroke="#f90" stroke-width="0.9"/></svg><div class="dot" style="top:10.3px;background:#fdb0b0"></div><div class="svc" style="top:11.3px;line-height:15px">Amazon Elastic Compute Cloud - Compute</div><div class="num" style="right:363.7px;top:11px;line-height:15px">$27,037.19</div><div class="num" style="right:151.5px;top:11px;line-height:15px">$1,425.49</div><div class="chg" style="right:9.5px;top:11px;line-height:15px">1,796.7%</div></div><div class="row alt" style="top:827px"><div class="cbtn"><svg class="abs" style="left:5.5px;top:5.5px" width="10" height="9" viewBox="0 0 10 9"><rect x="0.8" y="1" width="1.6" height="7" fill="#666"/><rect x="3.4" y="3.2" width="1.6" height="4.8" fill="#555"/><rect x="6.2" y="5.2" width="2.2" height="2.8" fill="#444"/><rect x="0.8" y="6.9" width="7.8" height="1.3" fill="#333"/></svg></div><svg class="abs" style="left:80px;top:10px" width="19" height="13" viewBox="0 0 19 13"><text x="0.8" y="7" font-family="Liberation Sans" font-size="11" fill="#2b3545" stroke="#2b3545" stroke-width="0.15" textLength="16.4" lengthAdjust="spacingAndGlyphs">aws</text><path d="M0.8 8.4 Q8.5 12.6 17 8.6" fill="none" stroke="#f90" stroke-width="1.2"/><path d="M15.3 8.3 L17.3 8.4 L16.9 10.1" fill="none" stroke="#f90" stroke-width="0.9"/></svg><div class="dot" style="top:10.3px;background:#fccbfd"></div><div class="svc" style="top:11.3px;line-height:15px">Amazon Virtual Private Cloud</div><div class="num" style="right:363.7px;top:11px;line-height:15px">$27,030.81</div><div class="num" style="right:151.5px;top:11px;line-height:15px">$1,685.69</div><div class="chg" style="right:9.5px;top:11px;line-height:15px">1,503.55%</div></div><div class="row" style="top:862px"><div class="cbtn"><svg class="abs" style="left:5.5px;top:5.5px" width="10" height="9" viewBox="0 0 10 9"><rect x="0.8" y="1" width="1.6" height="7" fill="#666"/><rect x="3.4" y="3.2" width="1.6" height="4.8" fill="#555"/><rect x="6.2" y="5.2" width="2.2" height="2.8" fill="#444"/><rect x="0.8" y="6.9" width="7.8" height="1.3" fill="#333"/></svg></div><svg class="abs" style="left:80px;top:10px" width="19" height="13" viewBox="0 0 19 13"><text x="0.8" y="7" font-family="Liberation Sans" font-size="11" fill="#2b3545" stroke="#2b3545" stroke-width="0.15" textLength="16.4" lengthAdjust="spacingAndGlyphs">aws</text><path d="M0.8 8.4 Q8.5 12.6 17 8.6" fill="none" stroke="#f90" stroke-width="1.2"/><path d="M15.3 8.3 L17.3 8.4 L16.9 10.1" fill="none" stroke="#f90" stroke-width="0.9"/></svg><div class="dot" style="top:10.3px;background:#a4e6fc"></div><div class="svc" style="top:11.3px;line-height:15px">Amazon CloudWatch</div><div class="num" style="right:363.7px;top:11px;line-height:15px">$19,914.67</div><div class="num" style="right:151.5px;top:11px;line-height:15px">$1,398.85</div><div class="chg" style="right:9.5px;top:11px;line-height:15px">1,323.65%</div></div>
</div>
<div class="ring"></div>
</body></html>
